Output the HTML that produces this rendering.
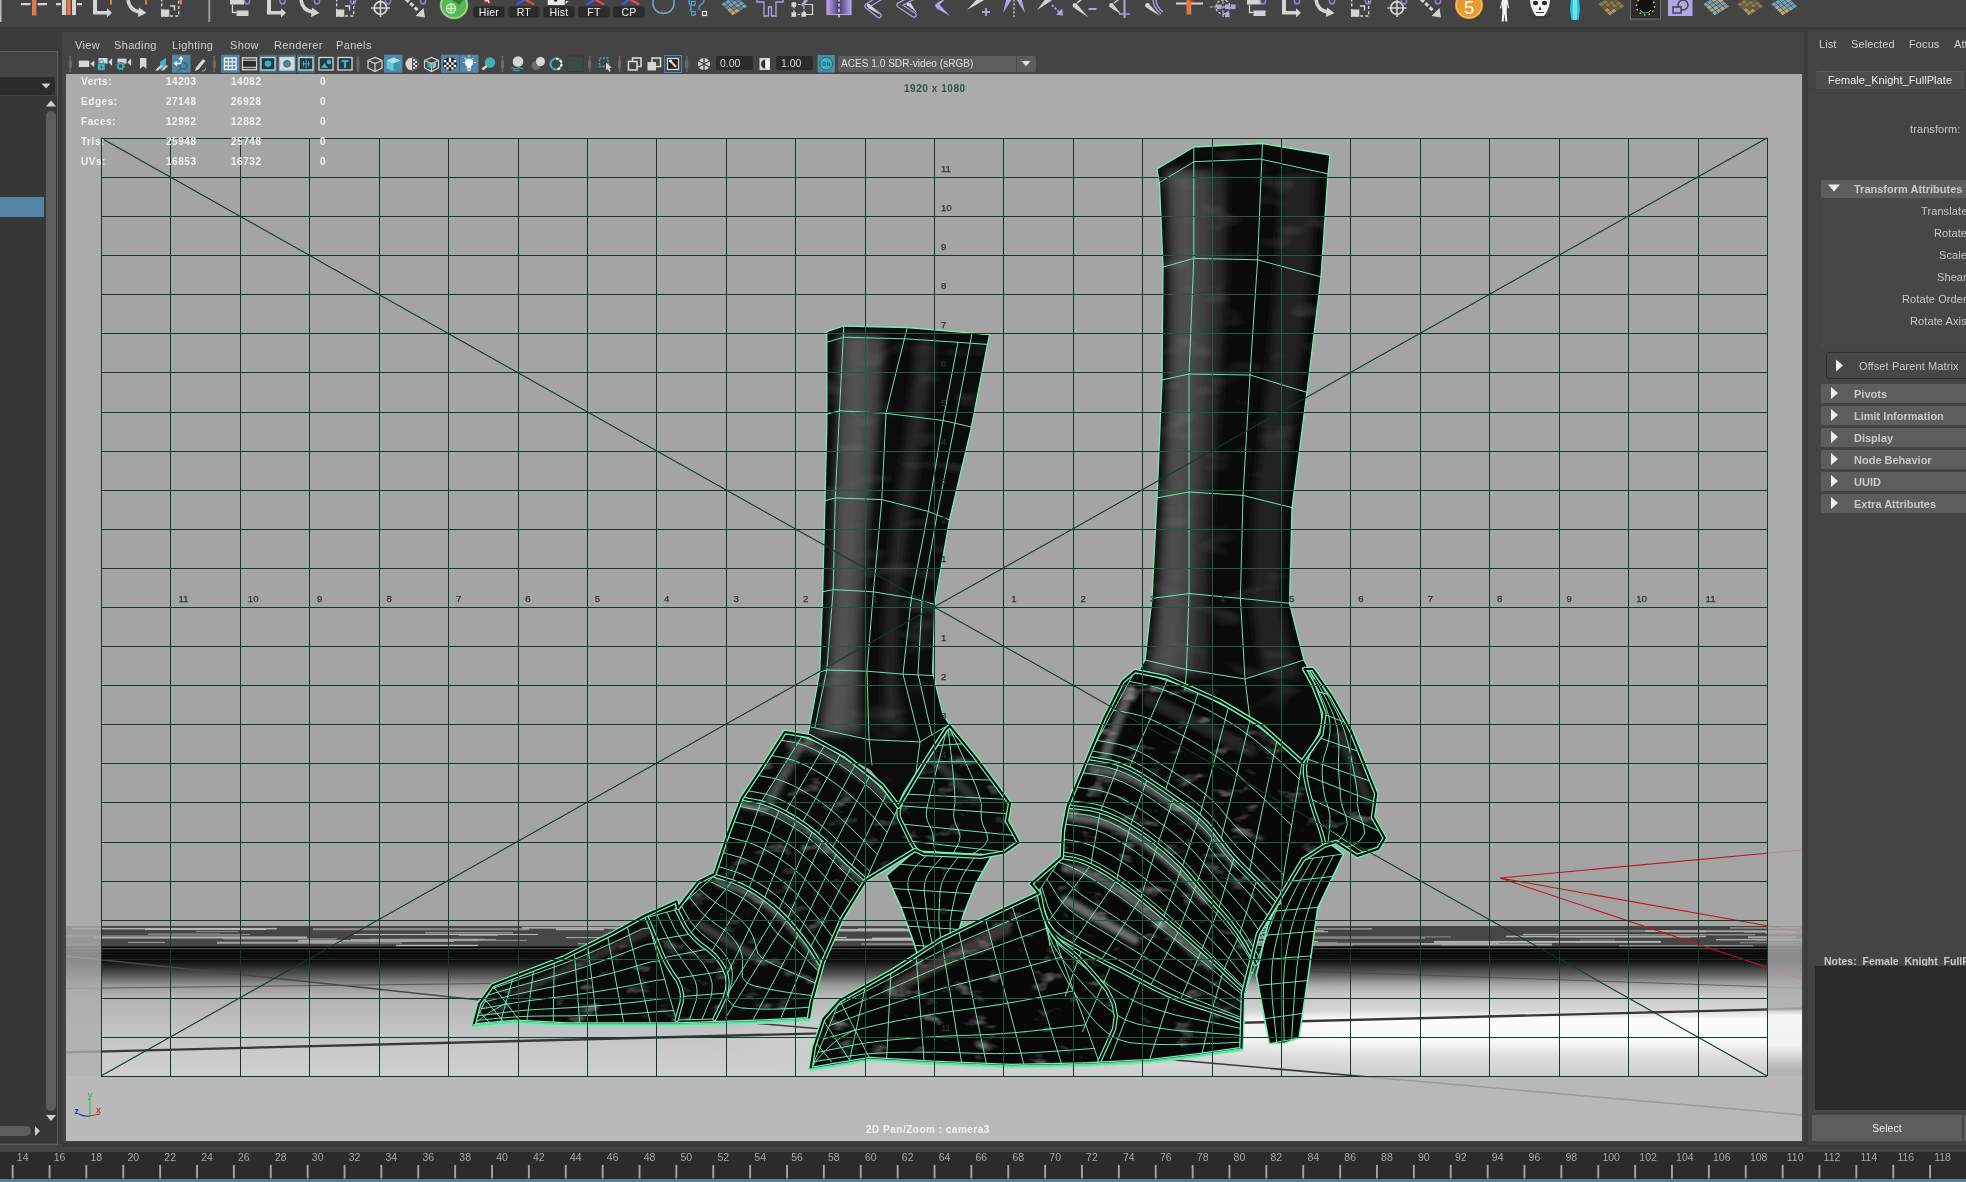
<!DOCTYPE html>
<html><head><meta charset="utf-8"><title>Maya</title>
<style>
html,body{margin:0;padding:0;}
body{width:1966px;height:1182px;overflow:hidden;background:#444444;position:relative;font-family:"Liberation Sans","DejaVu Sans",sans-serif;font-size:11px;color:#d8d8d8;}
.abs{position:absolute;}
.t{position:absolute;white-space:nowrap;line-height:1;will-change:transform;}
svg{position:absolute;left:0;top:0;overflow:visible;}
svg text{font-family:"Liberation Sans","DejaVu Sans",sans-serif;}

</style></head>
<body>
<div class="abs" style="left:0;top:0;width:1966px;height:27px;background:#444"></div>
<div class="abs" style="left:0;top:27px;width:1966px;height:3px;background:#3a3a3a"></div>
<div class="abs" style="left:0;top:30px;width:1966px;height:2px;background:#3c3c3c"></div>
<svg width="1966" height="32" viewBox="0 0 1966 32" style="overflow:hidden;will-change:transform"><rect x="-0.5" y="0" width="2" height="22" fill="#bdbdbd"/><rect x="21" y="3" width="9.5" height="2.2" fill="#d4d4d4"/><rect x="37.5" y="3" width="9.5" height="2.2" fill="#d4d4d4"/><rect x="32" y="0" width="4.4" height="15.5" fill="#e07a48"/><rect x="56" y="3" width="5" height="2.2" fill="#d4d4d4"/><rect x="77" y="3" width="5" height="2.2" fill="#d4d4d4"/><rect x="62" y="0" width="4" height="15" fill="#d4d4d4"/><rect x="66.5" y="0" width="4.2" height="15" fill="#e07a48"/><rect x="72" y="0" width="4" height="15" fill="#d4d4d4"/><path d="M93 0h4v11h10v-2.8l5 4.6-5 4.6v-2.8h-14z" fill="#d4d4d4"/><rect x="110" y="0" width="2" height="4.5" fill="#e07a48"/><path d="M128 0c1 7 5 11 12 12.3" fill="none" stroke="#d4d4d4" stroke-width="3.6"/><path d="M139 7.5l7.5 5.5-8.5 4z" fill="#d4d4d4"/><rect x="145" y="0" width="2" height="4.5" fill="#e07a48"/><rect x="161.7" y="-3" width="17" height="19" fill="none" stroke="#d4d4d4" stroke-width="1.4" stroke-dasharray="3 2.2"/><rect x="161" y="9.5" width="8.3" height="7.2" fill="#d4d4d4"/><path d="M170 6h4.5v4.5" fill="none" stroke="#d4d4d4" stroke-width="1.4"/><rect x="180" y="0" width="2" height="4.5" fill="#e07a48"/><rect x="208.3" y="0" width="2" height="22" fill="#9a9a9a"/><rect x="230" y="0" width="14" height="4.5" fill="#d4d4d4"/><path d="M232.5 5v7.5h4" fill="none" stroke="#d4d4d4" stroke-width="1.3"/><rect x="236.5" y="10.5" width="12" height="5.5" fill="#d4d4d4"/><ellipse cx="247" cy="0.5" rx="2.6" ry="3.4" fill="none" stroke="#8a86c8" stroke-width="1.6"/><path d="M267 0h4v11h10v-2.8l5 4.6-5 4.6v-2.8h-14z" fill="#d4d4d4"/><ellipse cx="282.5" cy="0.5" rx="2.6" ry="3.4" fill="none" stroke="#8a86c8" stroke-width="1.6"/><path d="M301 0c1 7 5 11 12 12.3" fill="none" stroke="#d4d4d4" stroke-width="3.6"/><path d="M312 7.5l7.5 5.5-8.5 4z" fill="#d4d4d4"/><ellipse cx="317" cy="0.5" rx="2.6" ry="3.4" fill="none" stroke="#8a86c8" stroke-width="1.6"/><rect x="336.7" y="-3" width="17" height="19" fill="none" stroke="#d4d4d4" stroke-width="1.4" stroke-dasharray="3 2.2"/><rect x="336" y="9.5" width="8.3" height="7.2" fill="#d4d4d4"/><path d="M345 6h4.5v4.5" fill="none" stroke="#d4d4d4" stroke-width="1.4"/><ellipse cx="353" cy="0.5" rx="2.6" ry="3.4" fill="none" stroke="#8a86c8" stroke-width="1.6"/><circle cx="380.5" cy="8" r="6.3" fill="none" stroke="#d4d4d4" stroke-width="1.8"/><path d="M380.5 -2v19M371 8h19" stroke="#d4d4d4" stroke-width="1.6"/><ellipse cx="388" cy="0.5" rx="2.6" ry="3.4" fill="none" stroke="#8a86c8" stroke-width="1.6"/><path d="M406 -1l12 11.5" stroke="#d4d4d4" stroke-width="3.2" stroke-dasharray="4 2"/><path d="M425 17.5l-9.5-1.5 8-8z" fill="#d4d4d4"/><ellipse cx="423" cy="0.5" rx="2.6" ry="3.4" fill="none" stroke="#8a86c8" stroke-width="1.6"/><circle cx="454" cy="5" r="14.3" fill="#59b556"/><circle cx="454" cy="5" r="13" fill="none" stroke="#9ad894" stroke-width="1.6"/><path d="M447 -6c6-3 14 0 17 5l-5 6c-4-4-9-4-12-11z" fill="#2e7d32"/><circle cx="451" cy="8.5" r="4.6" fill="#7ccc78" stroke="#d8f0d4" stroke-width="1.2"/><path d="M451 4v9M446.5 8.5h9" stroke="#d8f0d4" stroke-width="1"/><rect x="473.2" y="6.2" width="31.4" height="11.6" rx="3" fill="#2b2b2b"/><text x="488.9" y="16" font-size="10.5" fill="#f2f2f2" text-anchor="middle" font-family="'Liberation Sans','DejaVu Sans',sans-serif" letter-spacing="0.2">Hier</text><path d="M483.7 -1l1.5 4 1.5-2 2 3 1.5-1-1.5-4.5" fill="#fff" stroke="#c02030" stroke-width="1"/><rect x="508.2" y="6.2" width="31.4" height="11.6" rx="3" fill="#2b2b2b"/><text x="523.9" y="16" font-size="10.5" fill="#f2f2f2" text-anchor="middle" font-family="'Liberation Sans','DejaVu Sans',sans-serif" letter-spacing="0.2">RT</text><path d="M516.7 4.5l8.5-5" stroke="#4a52e0" stroke-width="2.2"/><path d="M525.2 -0.5l9 5" stroke="#e04858" stroke-width="2.2"/><rect x="543.2" y="6.2" width="31.4" height="11.6" rx="3" fill="#2b2b2b"/><text x="558.9000000000001" y="16" font-size="10.5" fill="#f2f2f2" text-anchor="middle" font-family="'Liberation Sans','DejaVu Sans',sans-serif" letter-spacing="0.2">Hist</text><rect x="547.7" y="-2" width="17" height="7" fill="#e8e8e8"/><circle cx="555.7" cy="0" r="1.8" fill="#111"/><path d="M565.7 1l3 0-3 3z" fill="#e8e8e8"/><rect x="578.2" y="6.2" width="31.4" height="11.6" rx="3" fill="#2b2b2b"/><text x="593.9000000000001" y="16" font-size="10.5" fill="#f2f2f2" text-anchor="middle" font-family="'Liberation Sans','DejaVu Sans',sans-serif" letter-spacing="0.2">FT</text><path d="M586.7 4.5l8.5-5" stroke="#4a52e0" stroke-width="2.2"/><path d="M595.2 -0.5l9 5" stroke="#e04858" stroke-width="2.2"/><rect x="613.2" y="6.2" width="31.4" height="11.6" rx="3" fill="#2b2b2b"/><text x="628.9000000000001" y="16" font-size="10.5" fill="#f2f2f2" text-anchor="middle" font-family="'Liberation Sans','DejaVu Sans',sans-serif" letter-spacing="0.2">CP</text><path d="M621.7 4.5l8.5-5" stroke="#4a52e0" stroke-width="2.2"/><path d="M630.2 -0.5l9 5" stroke="#e04858" stroke-width="2.2"/><circle cx="663.5" cy="3" r="10.6" fill="none" stroke="#6aaed0" stroke-width="1.5"/><path d="M660.8 11.8a3 1.6 0 0 1 5.4 0" fill="none" stroke="#d04040" stroke-width="1"/><path d="M690 -1c-4 5 4 6 0 12M703 -1c4 5-8 6-3 11" fill="none" stroke="#4a8fb8" stroke-width="1.8"/><g fill="#444" stroke="#5aa0c8" stroke-width="1.2"><rect x="691.5" y="1.5" width="3.6" height="3.6"/><rect x="691.5" y="11.5" width="3.6" height="3.6"/></g><rect x="702.5" y="11.5" width="4" height="4" fill="#444" stroke="#e0e0e0" stroke-width="1.2"/><g transform="matrix(3.75,-2.25,2.9,2.9,721,4)"><rect x="0.06" y="0.06" width="0.88" height="0.88" rx="0.12" fill="#6f9fb4"/><rect x="1.06" y="0.06" width="0.88" height="0.88" rx="0.12" fill="#6f9fb4"/><rect x="2.06" y="0.06" width="0.88" height="0.88" rx="0.12" fill="#5c8494"/><rect x="3.06" y="0.06" width="0.88" height="0.88" rx="0.12" fill="#c8a860"/><rect x="0.06" y="1.06" width="0.88" height="0.88" rx="0.12" fill="#5c8494"/><rect x="1.06" y="1.06" width="0.88" height="0.88" rx="0.12" fill="#6f9fb4"/><rect x="2.06" y="1.06" width="0.88" height="0.88" rx="0.12" fill="#6f9fb4"/><rect x="3.06" y="1.06" width="0.88" height="0.88" rx="0.12" fill="#5c8494"/><rect x="0.06" y="2.06" width="0.88" height="0.88" rx="0.12" fill="#c8a860"/><rect x="1.06" y="2.06" width="0.88" height="0.88" rx="0.12" fill="#5c8494"/><rect x="2.06" y="2.06" width="0.88" height="0.88" rx="0.12" fill="#6f9fb4"/><rect x="3.06" y="2.06" width="0.88" height="0.88" rx="0.12" fill="#6f9fb4"/><rect x="0.06" y="3.06" width="0.88" height="0.88" rx="0.12" fill="#c8a860"/><rect x="1.06" y="3.06" width="0.88" height="0.88" rx="0.12" fill="#c8a860"/><rect x="2.06" y="3.06" width="0.88" height="0.88" rx="0.12" fill="#5c8494"/><rect x="3.06" y="3.06" width="0.88" height="0.88" rx="0.12" fill="#6f9fb4"/></g><path d="M757 -1v3h7v14h4.5v-9h3v9h4.5v-14h7v-3" fill="none" stroke="#b0a2e4" stroke-width="1.3"/><rect x="794" y="4.5" width="10" height="10" fill="none" stroke="#d4d4d4" stroke-width="1.2" stroke-dasharray="2.4 1.6"/><path d="M804 4.5h8.5v10H804" fill="none" stroke="#d4d4d4" stroke-width="1.2"/><g fill="#d4d4d4"><rect x="791.5" y="2.2" width="4.6" height="4.6"/><rect x="791.5" y="12.2" width="4.6" height="4.6"/><rect x="801.5" y="12.2" width="4.6" height="4.6"/></g><path d="M802 6l5-7" stroke="#b0a2e4" stroke-width="3"/><defs><linearGradient id="mir" x1="0" y1="0" x2="1" y2="0"><stop offset="0" stop-color="#b8a8f0"/><stop offset="0.42" stop-color="#5a4a80"/><stop offset="0.5" stop-color="#3c3258"/><stop offset="0.58" stop-color="#5a4a80"/><stop offset="1" stop-color="#b8a8f0"/></linearGradient></defs><rect x="827" y="-2" width="24" height="16.5" fill="url(#mir)" stroke="#b0a2e4" stroke-width="1.2"/><path d="M839 -2v20" stroke="#f0f0f0" stroke-width="1.3" stroke-dasharray="3.4 2"/><path d="M880 -2l-13 8 12 9.5" fill="none" stroke="#b0a2e4" stroke-width="5.5" stroke-linejoin="round" stroke-linecap="round"/><path d="M880 -2l-13 8 12 9.5" fill="none" stroke="#444" stroke-width="3" stroke-linejoin="round" stroke-linecap="round"/><path d="M867.8 8.1L880.0 14.5L870.2 4.9z" fill="#d4d4d4"/><circle cx="868.5" cy="5.5" r="1.8" fill="#d4d4d4"/><path d="M912 -2l-13 7 15 10" fill="none" stroke="#b0a2e4" stroke-width="5.5" stroke-linejoin="round" stroke-linecap="round"/><path d="M912 -2l-13 7 15 10" fill="none" stroke="#444" stroke-width="3" stroke-linejoin="round" stroke-linecap="round"/><path d="M907.5 5.3L917.0 13.0L910.5 2.7z" fill="#d4d4d4"/><circle cx="908.5" cy="4.5" r="1.8" fill="#d4d4d4"/><path d="M936.0 7.9L950.0 16.0L939.0 4.1z" fill="#b0a2e4"/><circle cx="937.5" cy="5.5" r="2.3" fill="#b0a2e4"/><path d="M939.0 5.3L946.0 -2.0L937.0 2.7z" fill="#b0a2e4"/><path d="M980.1 -4.3L967.0 10.0L983.9 0.3z" fill="#d4d4d4"/><path d="M986 8v8M982 12h8" stroke="#b0a2e4" stroke-width="1.8"/><path d="M1006.6 -2.0L1003.0 13.0L1011.4 0.0z" fill="#b0a2e4"/><path d="M1016.6 0.0L1025.0 13.0L1021.4 -2.0z" fill="#b0a2e4"/><path d="M1014 -1v18" stroke="#b8b8a8" stroke-width="1.5" stroke-dasharray="2.4 1.6"/><path d="M1048.0 -4.2L1037.0 10.0L1052.0 0.2z" fill="#d4d4d4"/><path d="M1052 5l7 7" stroke="#b0a2e4" stroke-width="1.8" stroke-dasharray="2.4 1.4"/><path d="M1063 15.5l-7-.8 6.2-6.2z" fill="#b0a2e4"/><path d="M1074.6 8.2L1088.0 17.0L1077.4 4.8z" fill="#d4d4d4"/><circle cx="1075" cy="5.5" r="2.4" fill="#d4d4d4"/><path d="M1077 3l5-4" stroke="#d4d4d4" stroke-width="1.6"/><rect x="1088.5" y="8" width="8" height="2" fill="#b0a2e4"/><path d="M1111.7 8.5L1121.0 14.0L1114.3 5.5z" fill="#d4d4d4"/><circle cx="1111.5" cy="5.5" r="2.4" fill="#d4d4d4"/><path d="M1114 3l5-4" stroke="#d4d4d4" stroke-width="1.6"/><path d="M1124.5 -1v19" stroke="#b0a2e4" stroke-width="2"/><path d="M1119 14h11" stroke="#b0a2e4" stroke-width="1.4"/><path d="M1147.7 8.5L1160.0 16.0L1150.3 5.5z" fill="#d4d4d4"/><circle cx="1147.5" cy="5.5" r="2.4" fill="#d4d4d4"/><path d="M1153 -1c0 7 3 11 8 15" fill="none" stroke="#b0a2e4" stroke-width="1.3"/><path d="M1156 -1c0 6 3 10 7 13" fill="none" stroke="#b0a2e4" stroke-width="1.3"/><rect x="1176" y="2.5" width="27" height="2" fill="#d4d4d4"/><rect x="1186.5" y="0" width="4.8" height="14.5" fill="#e07a48"/><path d="M1190 0c1 2 3 2 4 0" stroke="#d03020" stroke-width="1.2" fill="none"/><circle cx="1223" cy="7" r="7" fill="none" stroke="#d4d4d4" stroke-width="1.3" stroke-dasharray="2.6 1.8"/><path d="M1210 7h26M1223 -3v20" stroke="#d4d4d4" stroke-width="1" stroke-dasharray="2.6 1.8"/><g fill="#b0a2e4"><rect x="1217" y="4.5" width="4.6" height="4.6"/><rect x="1225" y="4.5" width="4.6" height="4.6"/><rect x="1231" y="4.5" width="4.6" height="4.6"/><rect x="1225" y="12.5" width="4.6" height="4.6"/></g><rect x="1247" y="0" width="14" height="4.5" fill="#d4d4d4"/><path d="M1249.5 5v7.5h4" fill="none" stroke="#d4d4d4" stroke-width="1.3"/><rect x="1253.5" y="10.5" width="12" height="5.5" fill="#d4d4d4"/><ellipse cx="1263" cy="0.5" rx="2.6" ry="3.4" fill="none" stroke="#8a86c8" stroke-width="1.6"/><path d="M1282 0h4v11h10v-2.8l5 4.6-5 4.6v-2.8h-14z" fill="#d4d4d4"/><ellipse cx="1297" cy="0.5" rx="2.6" ry="3.4" fill="none" stroke="#8a86c8" stroke-width="1.6"/><path d="M1316 0c1 7 5 11 12 12.3" fill="none" stroke="#d4d4d4" stroke-width="3.6"/><path d="M1327 7.5l7.5 5.5-8.5 4z" fill="#d4d4d4"/><ellipse cx="1332" cy="0.5" rx="2.6" ry="3.4" fill="none" stroke="#8a86c8" stroke-width="1.6"/><rect x="1351.7" y="-3" width="17" height="19" fill="none" stroke="#d4d4d4" stroke-width="1.4" stroke-dasharray="3 2.2"/><rect x="1351" y="9.5" width="8.3" height="7.2" fill="#d4d4d4"/><path d="M1360 6h4.5v4.5" fill="none" stroke="#d4d4d4" stroke-width="1.4"/><ellipse cx="1368" cy="0.5" rx="2.6" ry="3.4" fill="none" stroke="#8a86c8" stroke-width="1.6"/><circle cx="1397" cy="8" r="6.3" fill="none" stroke="#d4d4d4" stroke-width="1.8"/><path d="M1397 -2v19M1387.500 8h19" stroke="#d4d4d4" stroke-width="1.6"/><ellipse cx="1404" cy="0.5" rx="2.6" ry="3.4" fill="none" stroke="#8a86c8" stroke-width="1.6"/><path d="M1421 -1l12 11.500" stroke="#d4d4d4" stroke-width="3.2" stroke-dasharray="4 2"/><path d="M1441 17.500l-9.500-1.500 8-8z" fill="#d4d4d4"/><ellipse cx="1438" cy="0.5" rx="2.6" ry="3.4" fill="none" stroke="#8a86c8" stroke-width="1.6"/><circle cx="1469" cy="5" r="14" fill="#e89a2e"/><circle cx="1469" cy="5" r="12.6" fill="none" stroke="#f4c070" stroke-width="1.2"/><text x="1469" y="13.5" font-size="19" fill="#fff" text-anchor="middle" font-family="'Liberation Sans',sans-serif">5</text><path d="M1502.500 -2h5l1.5 10-1 .5-1-5-.3 9 .6 9h-2l-.8-8-.8 8h-2l.6-9-.3-9-1 5-1-.5z" fill="#f2f2f2"/><path d="M1530 -2c0 9 3 14 6 18h8c3-4 6-9 6-18z" fill="#f0f0f0"/><ellipse cx="1535.500" cy="3" rx="2.600" ry="2.200" fill="#222"/><ellipse cx="1544.500" cy="3" rx="2.600" ry="2.200" fill="#222"/><path d="M1540 6l-1.500 4h3z" fill="#333"/><path d="M1536 12.500h8" stroke="#333" stroke-width="1"/><path d="M1528 14c4 5 20 5 24 0" stroke="#333" stroke-width="2" fill="none" opacity="0.5"/><path d="M1571 -2h8l1 12-1.500 10h-7l-1.500-10z" fill="#22c0d8"/><path d="M1573 -2h4l.5 12-.8 10h-3.400l-.8-10z" fill="#6ae0f0"/><g transform="matrix(3.75,-2.25,2.9,2.9,1598,4)"><rect x="0.06" y="0.06" width="0.88" height="0.88" rx="0.12" fill="#8a7a4a"/><rect x="1.06" y="0.06" width="0.88" height="0.88" rx="0.12" fill="#8a7a4a"/><rect x="2.06" y="0.06" width="0.88" height="0.88" rx="0.12" fill="#6a6240"/><rect x="3.06" y="0.06" width="0.88" height="0.88" rx="0.12" fill="#b09858"/><rect x="0.06" y="1.06" width="0.88" height="0.88" rx="0.12" fill="#6a6240"/><rect x="1.06" y="1.06" width="0.88" height="0.88" rx="0.12" fill="#8a7a4a"/><rect x="2.06" y="1.06" width="0.88" height="0.88" rx="0.12" fill="#8a7a4a"/><rect x="3.06" y="1.06" width="0.88" height="0.88" rx="0.12" fill="#6a6240"/><rect x="0.06" y="2.06" width="0.88" height="0.88" rx="0.12" fill="#b09858"/><rect x="1.06" y="2.06" width="0.88" height="0.88" rx="0.12" fill="#6a6240"/><rect x="2.06" y="2.06" width="0.88" height="0.88" rx="0.12" fill="#8a7a4a"/><rect x="3.06" y="2.06" width="0.88" height="0.88" rx="0.12" fill="#8a7a4a"/><rect x="0.06" y="3.06" width="0.88" height="0.88" rx="0.12" fill="#b09858"/><rect x="1.06" y="3.06" width="0.88" height="0.88" rx="0.12" fill="#b09858"/><rect x="2.06" y="3.06" width="0.88" height="0.88" rx="0.12" fill="#6a6240"/><rect x="3.06" y="3.06" width="0.88" height="0.88" rx="0.12" fill="#8a7a4a"/></g><rect x="1630.500" y="-3" width="30" height="22" fill="#2b2b2b" stroke="#707070" stroke-width="1"/><circle cx="1645.500" cy="6" r="9" fill="#111" stroke="#e8e040" stroke-width="1.4" stroke-dasharray="1.600 3.100"/><path d="M1640 10a6.500 6.500 0 0 0 11 0" fill="none" stroke="#6ad0a0" stroke-width="1"/><rect x="1668" y="-3" width="24.500" height="19" fill="#b4a4e6"/><circle cx="1683" cy="5" r="5" fill="none" stroke="#444" stroke-width="1.500"/><rect x="1673" y="7" width="8" height="6" fill="#b4a4e6" stroke="#444" stroke-width="1.500"/><g transform="matrix(3.75,-2.25,2.9,2.9,1703,4)"><rect x="0.06" y="0.06" width="0.88" height="0.88" rx="0.12" fill="#6f9fb4"/><rect x="1.06" y="0.06" width="0.88" height="0.88" rx="0.12" fill="#6f9fb4"/><rect x="2.06" y="0.06" width="0.88" height="0.88" rx="0.12" fill="#c8a860"/><rect x="3.06" y="0.06" width="0.88" height="0.88" rx="0.12" fill="#88a8b8"/><rect x="0.06" y="1.06" width="0.88" height="0.88" rx="0.12" fill="#c8a860"/><rect x="1.06" y="1.06" width="0.88" height="0.88" rx="0.12" fill="#6f9fb4"/><rect x="2.06" y="1.06" width="0.88" height="0.88" rx="0.12" fill="#6f9fb4"/><rect x="3.06" y="1.06" width="0.88" height="0.88" rx="0.12" fill="#c8a860"/><rect x="0.06" y="2.06" width="0.88" height="0.88" rx="0.12" fill="#88a8b8"/><rect x="1.06" y="2.06" width="0.88" height="0.88" rx="0.12" fill="#c8a860"/><rect x="2.06" y="2.06" width="0.88" height="0.88" rx="0.12" fill="#6f9fb4"/><rect x="3.06" y="2.06" width="0.88" height="0.88" rx="0.12" fill="#6f9fb4"/><rect x="0.06" y="3.06" width="0.88" height="0.88" rx="0.12" fill="#88a8b8"/><rect x="1.06" y="3.06" width="0.88" height="0.88" rx="0.12" fill="#88a8b8"/><rect x="2.06" y="3.06" width="0.88" height="0.88" rx="0.12" fill="#c8a860"/><rect x="3.06" y="3.06" width="0.88" height="0.88" rx="0.12" fill="#6f9fb4"/></g><g transform="matrix(3.75,-2.25,2.9,2.9,1737,4)"><rect x="0.06" y="0.06" width="0.88" height="0.88" rx="0.12" fill="#8a7a4a"/><rect x="1.06" y="0.06" width="0.88" height="0.88" rx="0.12" fill="#8a7a4a"/><rect x="2.06" y="0.06" width="0.88" height="0.88" rx="0.12" fill="#6a6240"/><rect x="3.06" y="0.06" width="0.88" height="0.88" rx="0.12" fill="#b09858"/><rect x="0.06" y="1.06" width="0.88" height="0.88" rx="0.12" fill="#6a6240"/><rect x="1.06" y="1.06" width="0.88" height="0.88" rx="0.12" fill="#8a7a4a"/><rect x="2.06" y="1.06" width="0.88" height="0.88" rx="0.12" fill="#8a7a4a"/><rect x="3.06" y="1.06" width="0.88" height="0.88" rx="0.12" fill="#6a6240"/><rect x="0.06" y="2.06" width="0.88" height="0.88" rx="0.12" fill="#b09858"/><rect x="1.06" y="2.06" width="0.88" height="0.88" rx="0.12" fill="#6a6240"/><rect x="2.06" y="2.06" width="0.88" height="0.88" rx="0.12" fill="#8a7a4a"/><rect x="3.06" y="2.06" width="0.88" height="0.88" rx="0.12" fill="#8a7a4a"/><rect x="0.06" y="3.06" width="0.88" height="0.88" rx="0.12" fill="#b09858"/><rect x="1.06" y="3.06" width="0.88" height="0.88" rx="0.12" fill="#b09858"/><rect x="2.06" y="3.06" width="0.88" height="0.88" rx="0.12" fill="#6a6240"/><rect x="3.06" y="3.06" width="0.88" height="0.88" rx="0.12" fill="#8a7a4a"/></g><g transform="matrix(3.75,-2.25,2.9,2.9,1771,4)"><rect x="0.06" y="0.06" width="0.88" height="0.88" rx="0.12" fill="#6f9fb4"/><rect x="1.06" y="0.06" width="0.88" height="0.88" rx="0.12" fill="#6f9fb4"/><rect x="2.06" y="0.06" width="0.88" height="0.88" rx="0.12" fill="#88a8b8"/><rect x="3.06" y="0.06" width="0.88" height="0.88" rx="0.12" fill="#c8a860"/><rect x="0.06" y="1.06" width="0.88" height="0.88" rx="0.12" fill="#88a8b8"/><rect x="1.06" y="1.06" width="0.88" height="0.88" rx="0.12" fill="#6f9fb4"/><rect x="2.06" y="1.06" width="0.88" height="0.88" rx="0.12" fill="#6f9fb4"/><rect x="3.06" y="1.06" width="0.88" height="0.88" rx="0.12" fill="#88a8b8"/><rect x="0.06" y="2.06" width="0.88" height="0.88" rx="0.12" fill="#c8a860"/><rect x="1.06" y="2.06" width="0.88" height="0.88" rx="0.12" fill="#88a8b8"/><rect x="2.06" y="2.06" width="0.88" height="0.88" rx="0.12" fill="#6f9fb4"/><rect x="3.06" y="2.06" width="0.88" height="0.88" rx="0.12" fill="#6f9fb4"/><rect x="0.06" y="3.06" width="0.88" height="0.88" rx="0.12" fill="#c8a860"/><rect x="1.06" y="3.06" width="0.88" height="0.88" rx="0.12" fill="#c8a860"/><rect x="2.06" y="3.06" width="0.88" height="0.88" rx="0.12" fill="#88a8b8"/><rect x="3.06" y="3.06" width="0.88" height="0.88" rx="0.12" fill="#6f9fb4"/></g></svg>
<div class="abs" style="left:0px;top:30px;width:62px;height:1114px;background:#3b3b3b;"></div>
<div class="abs" style="left:0px;top:51px;width:57px;height:1092px;background:#444;border:1px solid #5c5c5c;border-left:none;"></div>
<div class="abs" style="left:0px;top:77px;width:55px;height:18px;background:#2b2b2b;border-radius:0 2px 2px 0;"></div>
<div class="abs" style="left:0px;top:96px;width:57px;height:1028px;background:#373737;"></div>
<div class="abs" style="left:0px;top:197px;width:44px;height:20px;background:#5285a6;"></div>
<div class="abs" style="left:45px;top:96px;width:12px;height:1028px;background:#373737;"></div>
<div class="abs" style="left:46px;top:111px;width:10px;height:1000px;background:#5d5d5d;border-radius:5px;"></div>
<div class="abs" style="left:0px;top:1124px;width:57px;height:19px;background:#373737;"></div>
<div class="abs" style="left:-6px;top:1126px;width:37px;height:10px;background:#5d5d5d;border-radius:5px;"></div>
<svg width="66" height="1182" viewBox="0 0 66 1182"><g fill="#cfcfcf"><path d="M41.5 83.5h9l-4.5 5z"/><path d="M46 106.5h10l-5-6z"/><path d="M46 1115h10l-5 6z"/><path d="M35 1126v10l5-5z"/></g></svg>
<div class="abs" style="left:62px;top:32px;width:1740px;height:1110px;background:#444;"></div>
<div class="t" style="left:74.5px;top:40px;font-size:11px;color:#cfcfcf;letter-spacing:0.35px;">View</div>
<div class="t" style="left:114px;top:40px;font-size:11px;color:#cfcfcf;letter-spacing:0.35px;">Shading</div>
<div class="t" style="left:172px;top:40px;font-size:11px;color:#cfcfcf;letter-spacing:0.35px;">Lighting</div>
<div class="t" style="left:230px;top:40px;font-size:11px;color:#cfcfcf;letter-spacing:0.35px;">Show</div>
<div class="t" style="left:274px;top:40px;font-size:11px;color:#cfcfcf;letter-spacing:0.35px;">Renderer</div>
<div class="t" style="left:336px;top:40px;font-size:11px;color:#cfcfcf;letter-spacing:0.35px;">Panels</div>
<div class="abs" style="left:716px;top:56px;width:37px;height:14px;background:#2b2b2b;border-radius:2px;"></div>
<div class="t" style="left:720px;top:58px;font-size:10.5px;color:#d8d8d8;">0.00</div>
<div class="abs" style="left:776px;top:56px;width:37px;height:14px;background:#2b2b2b;border-radius:2px;"></div>
<div class="t" style="left:781px;top:58px;font-size:10.5px;color:#d8d8d8;">1.00</div>
<div class="abs" style="left:838px;top:56px;width:198px;height:16px;background:#5d5d5d;border-radius:2px;"></div>
<div class="t" style="left:841px;top:59px;font-size:10px;color:#e0e0e0;letter-spacing:0.05px;">ACES 1.0 SDR-video (sRGB)</div>
<svg width="1966" height="1182" viewBox="0 0 1966 1182"><rect x="69.5" y="56" width="1.6" height="16" fill="#6a6a6a"/><rect x="68.7" y="60" width="3.2" height="8" rx="1.5" fill="#6a6a6a"/><rect x="213.5" y="56" width="1.6" height="16" fill="#6a6a6a"/><rect x="212.70000000000002" y="60" width="3.2" height="8" rx="1.5" fill="#6a6a6a"/><rect x="357.2" y="56" width="1.6" height="16" fill="#6a6a6a"/><rect x="356.4" y="60" width="3.2" height="8" rx="1.5" fill="#6a6a6a"/><rect x="501.7" y="56" width="1.6" height="16" fill="#6a6a6a"/><rect x="500.9" y="60" width="3.2" height="8" rx="1.5" fill="#6a6a6a"/><rect x="588.8000000000001" y="56" width="1.6" height="16" fill="#6a6a6a"/><rect x="588.0" y="60" width="3.2" height="8" rx="1.5" fill="#6a6a6a"/><rect x="618.8000000000001" y="56" width="1.6" height="16" fill="#6a6a6a"/><rect x="618.0" y="60" width="3.2" height="8" rx="1.5" fill="#6a6a6a"/><rect x="685.9000000000001" y="56" width="1.6" height="16" fill="#6a6a6a"/><rect x="685.1" y="60" width="3.2" height="8" rx="1.5" fill="#6a6a6a"/><rect x="172" y="54.7" width="18.5" height="18" fill="#5285a6"/><rect x="221" y="54.7" width="18.5" height="18" fill="#5285a6"/><rect x="259" y="54.7" width="18" height="18" fill="#3f7186"/><rect x="278" y="54.7" width="18" height="18" fill="#3f7186"/><rect x="297" y="54.7" width="18" height="18" fill="#3f7186"/><rect x="384" y="54.7" width="18.5" height="18" fill="#5285a6"/><rect x="441" y="54.7" width="18.5" height="18" fill="#5285a6"/><rect x="460" y="54.7" width="18.5" height="18" fill="#5285a6"/><rect x="78.8" y="60.6" width="10.5" height="6.4" fill="#d6d6d6"/><path d="M90.3 63.8l4-3.4v6.8z" fill="#d6d6d6"/><rect x="98.5" y="58" width="9" height="5.6" fill="#d6d6d6"/><path d="M108.3 62l3.8-3.8v7.6z" fill="#d6d6d6"/><rect x="97.5" y="63.6" width="7.6" height="6.8" rx="0.8" fill="#43b0b8" stroke="#444" stroke-width="0.6"/><path d="M99.3 63.6v-1.4a2 2 0 0 1 4 0v1.4" fill="none" stroke="#43b0b8" stroke-width="1.3"/><rect x="100.7" y="66" width="1.2" height="2.4" fill="#1f5a60"/><rect x="117.5" y="58.6" width="9" height="5" fill="#d6d6d6"/><path d="M127.3 62.2l3.8-3.8v7.6z" fill="#d6d6d6"/><circle cx="120.6" cy="66" r="3.9" fill="#444"/><circle cx="120.6" cy="66" r="2.6" fill="none" stroke="#43b0b8" stroke-width="1.5"/><circle cx="120.6" cy="66" r="3.7" fill="none" stroke="#43b0b8" stroke-width="1.3" stroke-dasharray="1.45 1.45"/><path d="M140 58h6.4v11l-3.2-3-3.2 3z" fill="#d6d6d6"/><path d="M160 62l6-4.5v9l-6 3.5z" fill="#43b0b8"/><path d="M155 70.5l5-5h3l-5 5zM161 70.5l5-5h2.5l-5 5z" fill="#d6d6d6"/><circle cx="183.5" cy="66" r="3.4" fill="none" stroke="#1f6f82" stroke-width="1.4"/><path d="M181 68.5l-3.5 3" stroke="#1f6f82" stroke-width="1.6"/><path d="M175 63.5h6M181 63.5v-6M179 59.5l2-2.5 2 2.5M177 61.5l-2.5 2 2.5 2" stroke="#f0f0f0" stroke-width="1.3" fill="none"/><path d="M196 67.5l7-8.5 2.5 2-7 8.5-3.5 1.5z" fill="#d6d6d6"/><path d="M202 70.5a2.3 2.3 0 0 0 3.5-2.5" fill="none" stroke="#43b0b8" stroke-width="1.3"/><rect x="224.5" y="58" width="11.5" height="11.5" fill="none" stroke="#f2f2f2" stroke-width="1.4"/><path d="M228.3 58v11.5M232.2 58v11.5M224.5 61.8h11.5M224.5 65.7h11.5" stroke="#f2f2f2" stroke-width="1.2"/><rect x="242.5" y="57.8" width="14" height="12" fill="none" stroke="#d6d6d6" stroke-width="1.3"/><rect x="242.5" y="60.3" width="14" height="7" fill="#2d2d2d" stroke="#d6d6d6" stroke-width="1"/><rect x="261" y="57.5" width="14" height="12.5" fill="#1f3c44" stroke="#d6d6d6" stroke-width="1.3"/><circle cx="268" cy="63.8" r="3.3" fill="#43b0b8"/><rect x="280" y="57.5" width="14" height="12.5" fill="#d8d8d8" stroke="#d6d6d6" stroke-width="1.3"/><circle cx="287" cy="63.8" r="3.4" fill="#4a86a8" stroke="#2a5a70" stroke-width="0.8"/><rect x="299" y="57.5" width="14" height="12.5" fill="#1f3c44" stroke="#d6d6d6" stroke-width="1.3"/><path d="M302 63.8h8M306 59.5v8.5M303.5 61v5.6M308.5 61v5.6" stroke="#43b0b8" stroke-width="1" fill="none"/><rect x="319" y="57.5" width="14" height="12.5" fill="#1f3c44" stroke="#d6d6d6" stroke-width="1.3"/><path d="M321 68l3.5-5 3.5 5z" fill="#43b0b8"/><circle cx="329" cy="62" r="2.4" fill="#43b0b8"/><rect x="338" y="57.5" width="14" height="12.5" fill="#1f3c44" stroke="#d6d6d6" stroke-width="1.3"/><path d="M341.5 60h7v2h-2.4v6h-2.2v-6h-2.4z" fill="#43b0b8"/><path d="M368 60.5l7-3 7 3v7.5l-7 3.5-7-3.5z" fill="none" stroke="#d6d6d6" stroke-width="1.2"/><path d="M368 60.5l7 3 7-3M375 63.5v8" fill="none" stroke="#d6d6d6" stroke-width="1.2"/><path d="M386.5 60.5l7-3 7 3v7.5l-7 3.5-7-3.5z" fill="#63c6d4"/><path d="M386.5 60.5l7-3 7 3-7 3z" fill="#a6e4ec"/><path d="M393.5 63.5l7-3v7.5l-7 3.5z" fill="#3a9aaa"/><circle cx="412" cy="64" r="6.5" fill="#d6d6d6"/><path d="M412 57.5a6.5 6.5 0 0 1 0 13z" fill="#555"/><path d="M413 59h2v2h-2zM415 61h2v2h-2zM413 63h2v2h-2zM415 65h2v2h-2zM413 67h2v2h-2z" fill="#d6d6d6"/><path d="M424.5 60.5l7-3 7 3v7.5l-7 3.5-7-3.5z" fill="none" stroke="#d6d6d6" stroke-width="1.2"/><path d="M424.5 60.5l7 3 7-3M431.5 63.5v8" fill="none" stroke="#d6d6d6" stroke-width="1.2"/><path d="M427.5 62.5l4 1.8v4.5l-4-2z" fill="#43b0b8"/><path d="M432.5 64.3l3.5-1.8v4.5l-3.5 1.8z" fill="#8cd"/><circle cx="450" cy="64" r="6.8" fill="#1a1a1a"/><g fill="#f0f0f0"><rect x="444" y="60" width="2.4" height="2.4"/><rect x="448.8" y="60" width="2.4" height="2.4"/><rect x="453.6" y="60" width="2.4" height="2.4"/><rect x="446.4" y="62.4" width="2.4" height="2.4"/><rect x="451.2" y="62.4" width="2.4" height="2.4"/><rect x="444" y="64.8" width="2.4" height="2.4"/><rect x="448.8" y="64.8" width="2.4" height="2.4"/><rect x="453.6" y="64.8" width="2.4" height="2.4"/><rect x="446.4" y="67.2" width="2.4" height="2.4"/><rect x="451.2" y="67.2" width="2.4" height="2.4"/><rect x="448.8" y="57.6" width="2.4" height="2.4"/></g><path d="M469 58.5a4 4 0 0 1 2.2 7.4v2.6h-4.4v-2.6a4 4 0 0 1 2.2-7.4z" fill="#f4f4f4"/><rect x="467.3" y="69.3" width="3.4" height="1.6" fill="#ddd"/><path d="M469 55.5v1.5M463 62.5h1.6M474.4 62.5h1.6M464.6 58l1.1 1.1M473.4 58l-1.1 1.1" stroke="#f4f4f4" stroke-width="1.1"/><circle cx="490" cy="62.5" r="5.2" fill="#43b0b8"/><path d="M481.5 68.5l4.5-3.5 1.5 2-4.5 3.5z" fill="#d6d6d6"/><circle cx="518" cy="61.5" r="5.3" fill="#d6d6d6"/><path d="M511.5 67.5l4 1.5 4-1.5 4 1.5M513 70l3.5 1 3.5-1" stroke="#43b0b8" stroke-width="1.1" fill="none"/><circle cx="536" cy="65.5" r="4.5" fill="#6e6e6e"/><circle cx="540.5" cy="61.5" r="4.5" fill="#d6d6d6"/><circle cx="556" cy="64" r="5.5" fill="none" stroke="#43b0b8" stroke-width="2"/><path d="M556 58.5a5.5 5.5 0 0 1 0 11" fill="none" stroke="#f0f0f0" stroke-width="2.2" stroke-dasharray="2.6 1.6"/><rect x="567" y="56" width="16" height="15.5" fill="#3f4a48" stroke="#3a3a3a" stroke-width="1"/><rect x="599.5" y="58" width="8.5" height="8.5" fill="none" stroke="#43b0b8" stroke-width="1.3" stroke-dasharray="2 1.4"/><path d="M606 62.5l5.8 5.2-2.6.3 1.5 3-1.5.7-1.5-3-1.7 1.8z" fill="#d6d6d6"/><rect x="632.5" y="58" width="8.5" height="8.5" fill="none" stroke="#d6d6d6" stroke-width="1.6"/><rect x="628.5" y="61.5" width="8.5" height="8.5" fill="#444" stroke="#d6d6d6" stroke-width="1.6"/><rect x="652" y="58" width="8.5" height="8.5" fill="none" stroke="#d6d6d6" stroke-width="1.6"/><rect x="647.5" y="62" width="8.5" height="8.5" fill="#d6d6d6"/><rect x="664.5" y="55.5" width="17" height="17" fill="#3a4a54" stroke="#5285a6" stroke-width="1"/><rect x="667.5" y="58.5" width="11" height="11" fill="#222" stroke="#d6d6d6" stroke-width="1.3"/><path d="M670 60.5l6 6.5" stroke="#e8c49a" stroke-width="2.2"/><circle cx="670.5" cy="61" r="1.6" fill="#f4f4f4"/><circle cx="704" cy="64" r="6" fill="#d6d6d6"/><g stroke="#444" stroke-width="1.3"><path d="M704 58v4.5M709.2 61l-3.9 2.2M709.2 67l-3.9-2.2M704 70v-4.5M698.8 67l3.9-2.2M698.8 61l3.9 2.2"/></g><circle cx="704" cy="64" r="1.8" fill="#444"/><rect x="759.5" y="58" width="10.5" height="12" fill="#d6d6d6"/><path d="M765.5 59.5a4.5 4.5 0 0 0 0 9z" fill="#333"/><path d="M765.5 59.5a4.5 4.5 0 0 1 0 9z" fill="#fff"/><rect x="817.5" y="55" width="17.5" height="17.5" fill="#4d88a8"/><circle cx="826.3" cy="63.8" r="6.3" fill="#3fb4c0" stroke="#1f6f7a" stroke-width="1"/><text x="826.3" y="66" font-size="5.6" font-weight="bold" fill="#1c5a64" text-anchor="middle">ON</text><rect x="1016" y="56" width="1" height="16" fill="#4a4a4a"/><path d="M1021.5 61h9l-4.5 5.2z" fill="#e0e0e0"/></svg>
<svg width="1966" height="1182" viewBox="0 0 1966 1182">
<defs>
<clipPath id="vpclip"><rect x="66" y="74" width="1736" height="1067"/></clipPath>
<clipPath id="gateclip"><rect x="101" y="138" width="1666" height="938"/></clipPath>
<linearGradient id="floorg" gradientUnits="userSpaceOnUse" x1="0" y1="959" x2="0" y2="1141">
<stop offset="0" stop-color="#050505"/><stop offset="0.033" stop-color="#222"/><stop offset="0.088" stop-color="#555"/><stop offset="0.143" stop-color="#969696"/><stop offset="0.2" stop-color="#b2b2b2"/><stop offset="0.4" stop-color="#c4c4c4"/><stop offset="0.64" stop-color="#d0d0d0"/><stop offset="1" stop-color="#d0d0d0"/>
</linearGradient>
<linearGradient id="floorwv" gradientUnits="userSpaceOnUse" x1="0" y1="959" x2="0" y2="1141">
<stop offset="0" stop-color="#fff" stop-opacity="0"/><stop offset="0.1" stop-color="#fff" stop-opacity="0.1"/><stop offset="0.17" stop-color="#fff" stop-opacity="0.25"/><stop offset="0.28" stop-color="#fff" stop-opacity="0.42"/><stop offset="0.33" stop-color="#fff" stop-opacity="0.95"/><stop offset="0.45" stop-color="#fff" stop-opacity="0.9"/><stop offset="0.55" stop-color="#fff" stop-opacity="0.3"/><stop offset="0.64" stop-color="#fff" stop-opacity="0"/><stop offset="1" stop-color="#fff" stop-opacity="0"/>
</linearGradient>
<linearGradient id="floorwh" gradientUnits="userSpaceOnUse" x1="700" y1="0" x2="1350" y2="0">
<stop offset="0" stop-color="#000"/><stop offset="1" stop-color="#fff"/>
</linearGradient>
<linearGradient id="outw" gradientUnits="userSpaceOnUse" x1="0" y1="1008" x2="0" y2="1070"><stop offset="0" stop-color="#fff" stop-opacity="0"/><stop offset="0.12" stop-color="#fff" stop-opacity="0.85"/><stop offset="0.6" stop-color="#fff" stop-opacity="0.8"/><stop offset="1" stop-color="#fff" stop-opacity="0"/></linearGradient>
<mask id="wmask" maskUnits="userSpaceOnUse" x="0" y="0" width="1966" height="1182"><rect x="0" y="900" width="1966" height="282" fill="url(#floorwh)"/></mask>
<linearGradient id="legR" gradientUnits="userSpaceOnUse" x1="1140" y1="0" x2="1330" y2="0">
<stop offset="0" stop-color="#141414"/><stop offset="0.1" stop-color="#2c2c2c"/><stop offset="0.22" stop-color="#3a3a3a"/><stop offset="0.36" stop-color="#262626"/><stop offset="0.45" stop-color="#0a0a0a"/><stop offset="0.62" stop-color="#060606"/><stop offset="0.8" stop-color="#1a1a1a"/><stop offset="0.92" stop-color="#222"/><stop offset="1" stop-color="#0a0a0a"/>
</linearGradient>
<linearGradient id="legL" gradientUnits="userSpaceOnUse" x1="810" y1="0" x2="990" y2="0">
<stop offset="0" stop-color="#101010"/><stop offset="0.12" stop-color="#2a2a2a"/><stop offset="0.3" stop-color="#3c3c3c"/><stop offset="0.42" stop-color="#262626"/><stop offset="0.52" stop-color="#0a0a0a"/><stop offset="0.75" stop-color="#0c0c0c"/><stop offset="1" stop-color="#050505"/>
</linearGradient>
<filter id="bl4" x="-0.2" y="-0.2" width="1.4" height="1.4"><feGaussianBlur stdDeviation="4"/></filter>
<filter id="bl2" x="-0.2" y="-0.2" width="1.4" height="1.4"><feGaussianBlur stdDeviation="2.2"/></filter>
<clipPath id="cRL"><polygon points="1137.0,674.0 1145.0,660.0 1152.0,598.0 1157.0,498.0 1162.0,380.0 1163.0,267.0 1159.5,184.0 1157.0,169.0 1194.0,147.0 1262.5,143.5 1330.0,155.0 1328.0,174.0 1321.0,277.0 1307.0,392.0 1292.0,508.0 1289.5,603.0 1304.0,660.0 1314.0,679.0 1330.0,712.0 1327.0,740.0 1304.0,767.0 1263.0,728.0 1210.0,695.0"/></clipPath>
<clipPath id="cLL"><polygon points="807.8,735.5 812.0,714.0 819.7,672.0 822.6,596.0 824.7,511.4 826.8,427.0 826.8,342.0 826.8,331.7 843.8,326.0 907.0,327.5 989.6,334.7 987.5,344.4 970.6,431.0 949.5,520.0 934.7,604.4 932.6,672.0 943.0,714.4 953.7,731.0 946.0,735.0 900.8,805.6 870.0,769.5 815.0,741.0"/></clipPath>
<filter id="nz" x="0" y="0" width="1" height="1"><feTurbulence type="fractalNoise" baseFrequency="0.035 0.07" numOctaves="3" seed="5"/><feColorMatrix type="matrix" values="0 0 0 0 0.8  0 0 0 0 0.8  0 0 0 0 0.8  4 0 0 0 -2.45"/></filter>
<filter id="nz2" x="0" y="0" width="1" height="1"><feTurbulence type="fractalNoise" baseFrequency="0.02 0.05" numOctaves="2" seed="9"/><feColorMatrix type="matrix" values="0 0 0 0 0.45  0 0 0 0 0.45  0 0 0 0 0.45  3 0 0 0 -1.75"/></filter>
<clipPath id="cAll"><polygon points="807.8,735.5 812.0,714.0 819.7,672.0 822.6,596.0 824.7,511.4 826.8,427.0 826.8,342.0 826.8,331.7 843.8,326.0 907.0,327.5 989.6,334.7 987.5,344.4 970.6,431.0 949.5,520.0 934.7,604.4 932.6,672.0 943.0,714.4 953.7,731.0 946.0,735.0 900.8,805.6 870.0,769.5 815.0,741.0"/><polygon points="784.8,732.0 809.0,736.0 844.4,755.0 882.0,785.0 898.5,806.6 923.0,765.0 946.0,729.5 949.8,725.9 975.7,757.6 1010.0,803.6 1007.0,820.9 1018.8,842.4 1004.5,852.5 981.0,856.8 923.9,854.0 915.0,850.0 866.0,880.0 842.0,918.7 823.0,962.0 811.7,1002.0 808.8,1019.4 757.8,1021.8 676.6,1024.5 568.0,1024.5 516.0,1021.8 473.5,1025.5 479.0,1004.0 492.5,985.3 562.9,958.0 611.6,933.9 644.0,916.0 676.6,901.4 678.0,908.0 698.0,882.0 714.5,874.0 728.0,833.7 741.5,798.5 763.0,766.0"/><polygon points="915.0,851.0 886.5,875.5 900.9,907.0 912.4,938.8 918.0,956.0 922.0,992.0 960.0,992.0 960.0,927.0 964.0,913.0 975.7,884.0 992.0,855.0"/><polygon points="1137.0,674.0 1145.0,660.0 1152.0,598.0 1157.0,498.0 1162.0,380.0 1163.0,267.0 1159.5,184.0 1157.0,169.0 1194.0,147.0 1262.5,143.5 1330.0,155.0 1328.0,174.0 1321.0,277.0 1307.0,392.0 1292.0,508.0 1289.5,603.0 1304.0,660.0 1314.0,679.0 1330.0,712.0 1327.0,740.0 1304.0,767.0 1263.0,728.0 1210.0,695.0"/><polygon points="1135.0,671.0 1167.0,677.5 1220.0,701.0 1262.0,726.0 1302.0,762.0 1321.3,734.6 1324.5,713.5 1312.8,683.8 1304.4,669.0 1312.8,669.0 1331.9,696.5 1350.9,730.4 1376.3,793.8 1373.0,817.0 1384.8,838.0 1378.4,848.8 1357.3,856.0 1336.0,842.0 1324.5,845.6 1303.0,859.5 1280.5,897.0 1258.0,934.0 1243.0,993.5 1241.4,1049.0 1200.0,1055.0 1151.0,1061.0 1084.6,1064.6 1010.6,1066.0 932.0,1062.7 870.0,1059.0 810.5,1069.0 814.0,1047.0 823.4,1019.0 839.8,1000.4 893.6,970.0 940.4,939.6 998.9,911.5 1038.7,892.8 1031.0,883.7 1061.8,857.0 1063.0,830.0 1067.5,806.5 1087.6,757.9 1103.5,719.8 1122.5,681.7"/><polygon points="1343.7,854.0 1317.7,908.0 1308.4,975.0 1299.0,1038.0 1285.0,1043.0 1269.3,1043.7 1256.3,975.0 1267.4,926.5 1280.5,897.0 1303.0,859.5 1328.8,842.8"/></clipPath>
<clipPath id="cRB"><polygon points="1135.0,671.0 1167.0,677.5 1220.0,701.0 1262.0,726.0 1302.0,762.0 1321.3,734.6 1324.5,713.5 1312.8,683.8 1304.4,669.0 1312.8,669.0 1331.9,696.5 1350.9,730.4 1376.3,793.8 1373.0,817.0 1384.8,838.0 1378.4,848.8 1357.3,856.0 1336.0,842.0 1324.5,845.6 1303.0,859.5 1280.5,897.0 1258.0,934.0 1243.0,993.5 1241.4,1049.0 1200.0,1055.0 1151.0,1061.0 1084.6,1064.6 1010.6,1066.0 932.0,1062.7 870.0,1059.0 810.5,1069.0 814.0,1047.0 823.4,1019.0 839.8,1000.4 893.6,970.0 940.4,939.6 998.9,911.5 1038.7,892.8 1031.0,883.7 1061.8,857.0 1063.0,830.0 1067.5,806.5 1087.6,757.9 1103.5,719.8 1122.5,681.7"/></clipPath>
<clipPath id="cLB"><polygon points="784.8,732.0 809.0,736.0 844.4,755.0 882.0,785.0 898.5,806.6 923.0,765.0 946.0,729.5 949.8,725.9 975.7,757.6 1010.0,803.6 1007.0,820.9 1018.8,842.4 1004.5,852.5 981.0,856.8 923.9,854.0 915.0,850.0 866.0,880.0 842.0,918.7 823.0,962.0 811.7,1002.0 808.8,1019.4 757.8,1021.8 676.6,1024.5 568.0,1024.5 516.0,1021.8 473.5,1025.5 479.0,1004.0 492.5,985.3 562.9,958.0 611.6,933.9 644.0,916.0 676.6,901.4 678.0,908.0 698.0,882.0 714.5,874.0 728.0,833.7 741.5,798.5 763.0,766.0"/></clipPath>
</defs>
<g clip-path="url(#vpclip)">
<rect x="66" y="74" width="1736" height="1067" fill="#a4a4a4"/>
<rect x="66" y="926" width="1736" height="21" fill="#464646"/>
<rect x="1012" y="934.9" width="215" height="2" fill="#909090"/>
<rect x="1062" y="935.9" width="67" height="1" fill="#909090"/>
<rect x="556" y="928.2" width="48" height="2" fill="#b4b4b4"/>
<rect x="1180" y="944.3" width="153" height="1" fill="#a6a6a6"/>
<rect x="128" y="941.9" width="37" height="1" fill="#a6a6a6"/>
<rect x="597" y="940.9" width="148" height="1" fill="#a6a6a6"/>
<rect x="906" y="938.3" width="162" height="1.5" fill="#909090"/>
<rect x="997" y="934.0" width="216" height="1.5" fill="#b4b4b4"/>
<rect x="425" y="932.3" width="88" height="1" fill="#b4b4b4"/>
<rect x="1523" y="933.9" width="107" height="1" fill="#b4b4b4"/>
<rect x="1666" y="930.4" width="40" height="2" fill="#909090"/>
<rect x="1024" y="934.3" width="70" height="1.5" fill="#bcbcbc"/>
<rect x="608" y="928.1" width="223" height="1" fill="#b4b4b4"/>
<rect x="196" y="931.1" width="42" height="1" fill="#909090"/>
<rect x="351" y="939.1" width="132" height="2" fill="#a6a6a6"/>
<rect x="223" y="938.4" width="114" height="1" fill="#a6a6a6"/>
<rect x="1744" y="931.5" width="191" height="1" fill="#bcbcbc"/>
<rect x="718" y="930.4" width="201" height="1" fill="#b4b4b4"/>
<rect x="396" y="944.8" width="82" height="1.5" fill="#bcbcbc"/>
<rect x="148" y="933.6" width="72" height="1" fill="#a6a6a6"/>
<rect x="678" y="937.6" width="121" height="1" fill="#909090"/>
<rect x="341" y="942.5" width="61" height="1" fill="#a6a6a6"/>
<rect x="298" y="939.9" width="156" height="2" fill="#a6a6a6"/>
<rect x="1090" y="942.8" width="114" height="1" fill="#b4b4b4"/>
<rect x="1730" y="927.2" width="78" height="1.5" fill="#909090"/>
<rect x="1627" y="934.3" width="128" height="1" fill="#a6a6a6"/>
<rect x="869" y="928.8" width="161" height="1.5" fill="#b4b4b4"/>
<rect x="1645" y="930.4" width="180" height="1.5" fill="#b4b4b4"/>
<rect x="459" y="934.1" width="39" height="1.5" fill="#bcbcbc"/>
<rect x="1748" y="936.3" width="48" height="2" fill="#a6a6a6"/>
<rect x="1185" y="944.6" width="168" height="1" fill="#a6a6a6"/>
<rect x="861" y="943.6" width="101" height="1" fill="#bcbcbc"/>
<rect x="1148" y="926.9" width="126" height="1.5" fill="#bcbcbc"/>
<rect x="145" y="929.0" width="121" height="1" fill="#bcbcbc"/>
<rect x="1328" y="943.2" width="171" height="1.5" fill="#bcbcbc"/>
<rect x="858" y="928.1" width="46" height="1" fill="#909090"/>
<rect x="1036" y="942.5" width="155" height="2" fill="#909090"/>
<rect x="1100" y="937.3" width="46" height="1.5" fill="#b4b4b4"/>
<rect x="1312" y="942.8" width="108" height="2" fill="#909090"/>
<rect x="979" y="935.1" width="134" height="1.5" fill="#b4b4b4"/>
<rect x="872" y="937.6" width="76" height="2" fill="#b4b4b4"/>
<rect x="1191" y="940.9" width="127" height="1.5" fill="#b4b4b4"/>
<rect x="1223" y="932.1" width="71" height="1.5" fill="#a6a6a6"/>
<rect x="803" y="938.7" width="208" height="2" fill="#bcbcbc"/>
<rect x="369" y="938.8" width="116" height="1" fill="#a6a6a6"/>
<rect x="1054" y="933.6" width="93" height="1" fill="#a6a6a6"/>
<rect x="1506" y="935.7" width="200" height="1.5" fill="#b4b4b4"/>
<rect x="217" y="941.7" width="124" height="2" fill="#a6a6a6"/>
<rect x="942" y="933.6" width="164" height="1.5" fill="#909090"/>
<rect x="72" y="927.9" width="205" height="1.5" fill="#b4b4b4"/>
<rect x="566" y="937.1" width="188" height="1" fill="#b4b4b4"/>
<rect x="354" y="934.0" width="184" height="1" fill="#bcbcbc"/>
<rect x="1434" y="940.9" width="227" height="2" fill="#b4b4b4"/>
<rect x="969" y="928.5" width="158" height="1" fill="#bcbcbc"/>
<rect x="371" y="939.2" width="125" height="1" fill="#a6a6a6"/>
<rect x="968" y="940.5" width="37" height="1.5" fill="#a6a6a6"/>
<rect x="977" y="940.9" width="219" height="2" fill="#a6a6a6"/>
<rect x="1262" y="942.2" width="75" height="2" fill="#909090"/>
<rect x="823" y="928.9" width="155" height="2" fill="#b4b4b4"/>
<rect x="1178" y="936.7" width="131" height="2" fill="#bcbcbc"/>
<rect x="1765" y="932.5" width="50" height="1" fill="#b4b4b4"/>
<rect x="711" y="931.0" width="48" height="1.5" fill="#bcbcbc"/>
<rect x="1295" y="931.3" width="33" height="1" fill="#b4b4b4"/>
<rect x="996" y="934.7" width="184" height="1" fill="#909090"/>
<rect x="1560" y="930.5" width="116" height="1" fill="#b4b4b4"/>
<rect x="1238" y="936.4" width="213" height="1" fill="#909090"/>
<rect x="1619" y="945.0" width="134" height="2" fill="#909090"/>
<rect x="1243" y="937.2" width="182" height="1.5" fill="#909090"/>
<rect x="1016" y="941.9" width="63" height="1.5" fill="#bcbcbc"/>
<rect x="1716" y="938.9" width="204" height="1.5" fill="#a6a6a6"/>
<rect x="1740" y="942.2" width="135" height="1" fill="#909090"/>
<rect x="219" y="934.1" width="31" height="1" fill="#909090"/>
<rect x="94" y="936.5" width="213" height="2" fill="#b4b4b4"/>
<rect x="313" y="928.2" width="216" height="2" fill="#909090"/>
<rect x="1441" y="943.5" width="111" height="2" fill="#a6a6a6"/>
<rect x="621" y="935.6" width="210" height="1.5" fill="#909090"/>
<rect x="763" y="928.5" width="36" height="1" fill="#bcbcbc"/>
<rect x="1756" y="939.5" width="37" height="1" fill="#a6a6a6"/>
<rect x="522" y="926.7" width="175" height="2" fill="#a6a6a6"/>
<rect x="1317" y="928.4" width="55" height="1" fill="#bcbcbc"/>
<rect x="1580" y="939.5" width="35" height="1" fill="#909090"/>
<rect x="1554" y="936.5" width="137" height="1" fill="#a6a6a6"/>
<rect x="1105" y="942.2" width="201" height="1.5" fill="#a6a6a6"/>
<rect x="578" y="943.2" width="93" height="1" fill="#a6a6a6"/>
<rect x="362" y="940.9" width="49" height="1" fill="#a6a6a6"/>
<rect x="478" y="939.9" width="49" height="1" fill="#909090"/>
<rect x="1134" y="930.2" width="190" height="1" fill="#b4b4b4"/>
<rect x="653" y="937.0" width="194" height="1" fill="#bcbcbc"/>
<rect x="1146" y="939.5" width="99" height="1" fill="#a6a6a6"/>
<rect x="59" y="935.4" width="182" height="1" fill="#909090"/>
<rect x="66" y="946.5" width="1736" height="14" fill="#000"/>
<rect x="66" y="948.5" width="1736" height="0.7" fill="#8a8a8a"/>
<rect x="66" y="951.5" width="1736" height="0.8" fill="#333"/>
<rect x="66" y="954.5" width="1736" height="0.8" fill="#2a2a2a"/>
<rect x="66" y="957" width="1736" height="0.8" fill="#222"/>
<rect x="66" y="959" width="1736" height="182" fill="url(#floorg)"/>
<rect x="66" y="959" width="1736" height="182" fill="url(#floorwv)" mask="url(#wmask)"/>
<line x1="66" y1="956" x2="545" y2="1007" stroke="#484848" stroke-width="1.6"/>
<line x1="66" y1="988.5" x2="700" y2="981" stroke="#555" stroke-width="1.1"/>
<line x1="1300" y1="971" x2="1802" y2="988" stroke="#444" stroke-width="1" opacity="0.7"/>
<line x1="66" y1="1052.4" x2="1802" y2="1008.6" stroke="#383838" stroke-width="2.4"/>
<line x1="690" y1="1017.5" x2="1802" y2="1115" stroke="#3a3a3a" stroke-width="1.6"/>
<polygon points="807.8,735.5 812.0,714.0 819.7,672.0 822.6,596.0 824.7,511.4 826.8,427.0 826.8,342.0 826.8,331.7 843.8,326.0 907.0,327.5 989.6,334.7 987.5,344.4 970.6,431.0 949.5,520.0 934.7,604.4 932.6,672.0 943.0,714.4 953.7,731.0 946.0,735.0 900.8,805.6 870.0,769.5 815.0,741.0" fill="#0b0b0b"/>
<g clip-path="url(#cLL)"><g filter="url(#bl4)">
<polygon points="838.0,332.6 837.8,353.8 837.5,375.1 837.2,396.4 836.9,417.6 836.3,438.9 835.5,460.1 834.7,481.3 833.9,502.6 833.1,523.8 832.3,545.1 831.6,566.3 830.8,587.6 830.0,608.9 829.2,630.1 828.4,651.4 827.5,672.7 824.3,693.6 821.0,714.5 818.0,735.2 860.3,733.9 859.0,714.1 859.7,693.4 860.3,672.7 861.1,651.6 861.8,630.4 862.6,609.3 864.0,588.2 865.7,567.2 867.3,546.2 868.9,525.1 870.8,504.1 872.9,483.2 875.0,462.2 877.1,441.3 878.9,420.3 880.3,399.3 881.8,378.3 883.2,357.3 884.7,336.3" fill="#454545"/>
<polygon points="849.3,333.5 848.7,354.7 848.2,375.9 847.6,397.1 847.1,418.3 846.2,439.5 845.0,460.6 843.9,481.8 842.8,503.0 841.7,524.1 840.8,545.3 839.8,566.5 838.8,587.8 837.9,609.0 837.1,630.2 836.3,651.4 835.4,672.7 832.8,693.5 830.2,714.4 828.2,734.9 845.7,734.3 845.9,714.3 847.5,693.5 849.0,672.7 849.8,651.5 850.6,630.3 851.3,609.1 852.6,588.0 853.9,566.9 855.2,545.8 856.6,524.7 858.1,503.6 859.7,482.6 861.4,461.5 863.0,440.5 864.4,419.4 865.5,398.3 866.5,377.2 867.5,356.1 868.6,335.0" fill="#525252"/>
<polygon points="916.8,338.8 914.6,359.7 912.3,380.5 910.1,401.4 907.8,422.2 905.1,443.0 902.2,463.7 899.3,484.5 896.3,505.2 893.7,526.0 891.4,546.9 889.2,567.8 886.9,588.7 885.1,609.6 884.3,630.6 883.6,651.7 883.0,672.7 884.1,693.3 885.2,713.9 889.5,733.0 907.0,732.4 900.9,713.7 898.7,693.2 896.6,672.7 897.1,651.8 897.8,630.8 898.5,609.8 900.7,588.9 903.3,568.1 905.9,547.3 908.5,526.5 911.6,505.8 915.1,485.2 918.5,464.6 922.0,444.0 925.2,423.3 927.9,402.6 930.6,381.8 933.4,361.1 936.1,340.3" fill="#262626"/>
</g></g>
<polygon points="915.0,851.0 886.5,875.5 900.9,907.0 912.4,938.8 918.0,956.0 922.0,992.0 960.0,992.0 960.0,927.0 964.0,913.0 975.7,884.0 992.0,855.0" fill="#060606"/>
<polygon points="784.8,732.0 809.0,736.0 844.4,755.0 882.0,785.0 898.5,806.6 923.0,765.0 946.0,729.5 949.8,725.9 975.7,757.6 1010.0,803.6 1007.0,820.9 1018.8,842.4 1004.5,852.5 981.0,856.8 923.9,854.0 915.0,850.0 866.0,880.0 842.0,918.7 823.0,962.0 811.7,1002.0 808.8,1019.4 757.8,1021.8 676.6,1024.5 568.0,1024.5 516.0,1021.8 473.5,1025.5 479.0,1004.0 492.5,985.3 562.9,958.0 611.6,933.9 644.0,916.0 676.6,901.4 678.0,908.0 698.0,882.0 714.5,874.0 728.0,833.7 741.5,798.5 763.0,766.0" fill="#0a0a0a"/>
<g clip-path="url(#cLB)"><g fill="none" stroke-linecap="round" filter="url(#bl2)">
<path d="M744.5 805.5L746.3 805.8L750.0 806.5L755.6 807.6L762.9 808.9L771.0 811.5L779.8 815.2L789.4 820.0L799.6 826.0L809.3 832.5L818.5 839.7L827.2 847.3L835.2 855.5L842.7 862.8L849.4 869.3L855.5 875.0L860.9 879.8L865.0 883.4L867.6 885.8L869.0 887.0" stroke="#707070" stroke-width="6" opacity="0.7"/>
<path d="M717.5 882.7L719.3 883.3L723.0 884.4L728.6 886.2L735.9 888.5L743.7 891.8L751.8 896.0L760.3 901.2L769.1 907.3L777.5 913.9L785.3 921.1L792.6 928.7L799.3 936.8L805.3 944.3L810.3 951.0L814.6 957.1L817.9 962.5L820.5 966.6L822.2 969.2L823.0 970.6" stroke="#808080" stroke-width="6" opacity="0.7"/>
<path d="M790.8 744.0L792.3 744.2L795.3 744.8L799.9 745.5L805.9 746.5L812.7 748.4L820.1 751.3L828.3 755.1L837.1 759.9L846.1 765.3L855.2 771.4L864.5 778.2L873.9 785.8L881.0 791.4L885.6 795.1L888.0 797.0" stroke="#555" stroke-width="10" opacity="0.7"/>
<path d="M800 745L770 800" stroke="#5a5a5a" stroke-width="10" opacity="0.8"/>
<path d="M520 992L650 930" stroke="#4a3e3a" stroke-width="8" opacity="0.7"/>
<path d="M935 760L975 800" stroke="#3a3a3a" stroke-width="10" opacity="0.8"/>
<path d="M700 925L760 960" stroke="#4a4a4a" stroke-width="8" opacity="0.8"/>
</g></g>
<g clip-path="url(#cLB)"><rect x="470" y="720" width="560" height="310" filter="url(#nz)" opacity="0.38"/></g>
<g clip-path="url(#cLL)"><rect x="800" y="320" width="200" height="500" filter="url(#nz2)" opacity="0.22"/></g>
<g fill="none" stroke="#72eeb4" stroke-linejoin="round" stroke-linecap="round">
<path stroke-width="1" stroke-opacity="0.95" d="M826.8 342.3L843.8 337.2L907.2 338.9L958.0 342.3L987.5 344.4M826.8 414.2L839.5 410.8L886.0 413.3L943.0 420.5L970.6 426.8M824.7 500.8L835.3 497.9L881.8 499.6L928.3 511.4L949.5 519.9M822.6 591.8L833.2 589.6L873.4 591.8L911.4 598.0L934.7 604.4M819.7 672.0L826.8 670.0L867.0 671.2L903.0 674.2L932.6 675.5M810.8 727.0L869.0 739.7L920.0 741.9L945.0 727.0M843.8 326.2L839.5 410.8L835.3 497.9L833.2 589.6L826.8 670.0L815.0 727.0M907.2 327.5L886.0 413.3L881.8 499.6L873.4 591.8L867.0 671.2L869.0 739.7L872.0 765.0M958.0 342.3L943.0 420.5L928.3 511.4L911.4 598.0L903.0 674.2L920.0 741.9L915.0 780.0M972.0 334.0L955.0 422.8L937.0 515.0L922.0 601.0L918.0 674.0L932.0 735.0M779.6 740.0L785.6 741.0L791.7 742.0L797.7 743.3L803.5 745.2L809.2 747.4L814.8 750.0L820.2 752.7L825.6 755.7L830.9 758.8L836.1 762.0L841.2 765.4L846.2 769.0L851.1 772.6L855.9 776.4L860.7 780.3L865.4 784.2L870.0 788.3L874.4 792.4L878.8 796.7L883.0 801.2L886.9 805.9L890.8 810.6L894.6 815.4M769.6 755.3L775.8 756.3L782.0 757.4L788.1 758.7L794.0 760.6L799.8 762.9L805.5 765.5L811.1 768.3L816.6 771.3L822.0 774.5L827.2 777.9L832.4 781.4L837.5 785.1L842.4 788.9L847.3 792.8L852.0 796.9L856.7 801.0L861.3 805.2L865.9 809.5L870.4 813.8L874.7 818.3L878.9 823.0L883.0 827.6L887.1 832.3M756.7 775.2L763.0 776.4L769.3 777.5L775.6 778.8L781.7 780.7L787.6 783.1L793.5 785.8L799.2 788.7L804.8 791.8L810.3 795.1L815.7 798.6L821.0 802.2L826.1 806.1L831.1 810.0L836.0 814.2L840.7 818.5L845.4 822.9L850.1 827.3L854.7 831.8L859.3 836.2L863.9 840.7L868.4 845.2L872.9 849.8L877.4 854.3M746.7 790.5L753.1 791.7L759.6 792.9L766.0 794.2L772.2 796.2L778.3 798.6L784.2 801.3L790.0 804.3L795.7 807.5L801.4 810.8L806.8 814.5L812.2 818.2L817.4 822.2L822.4 826.3L827.4 830.6L832.1 835.1L836.7 839.7L841.4 844.3L846.1 848.8L850.8 853.4L855.6 857.9L860.3 862.3L865.1 866.8L869.9 871.2M784.8 732.0 L741.5 798.5M802.7 735.3 L760.9 802.3M825.0 744.6 L785.3 812.4M840.7 753.7 L802.2 822.7M855.6 764.1 L817.9 834.8M869.9 775.5 L832.2 848.5M887.4 792.2 L851.2 866.8M898.5 806.6 L866.0 880.0M738.8 806.2L745.2 807.5L751.7 808.8L758.1 810.2L764.3 812.2L770.4 814.6L776.3 817.4L782.1 820.4L787.8 823.7L793.4 827.0L798.9 830.7L804.2 834.5L809.4 838.6L814.4 842.8L819.3 847.2L823.9 851.8L828.5 856.5L833.1 861.1L837.8 865.8L842.4 870.4L847.1 874.9L851.9 879.4L856.6 883.9L861.4 888.4M733.4 821.7L739.7 823.1L746.0 824.5L752.3 825.9L758.4 828.0L764.4 830.5L770.2 833.3L775.9 836.4L781.5 839.6L787.0 843.0L792.3 846.7L797.5 850.5L802.5 854.6L807.4 858.8L812.2 863.2L816.7 867.8L821.1 872.5L825.6 877.2L830.0 881.8L834.4 886.5L838.9 891.2L843.3 895.8L847.8 900.4L852.2 905.1M728.0 837.1L734.2 838.6L740.3 840.2L746.5 841.7L752.5 843.9L758.3 846.4L764.1 849.2L769.6 852.3L775.1 855.6L780.5 859.0L785.6 862.7L790.8 866.5L795.6 870.6L800.4 874.8L805.0 879.2L809.4 883.8L813.7 888.5L818.0 893.2L822.3 897.9L826.5 902.7L830.7 907.4L834.8 912.2L838.9 917.0L843.0 921.8M722.6 852.5L728.6 854.2L734.7 855.9L740.7 857.5L746.6 859.8L752.3 862.3L757.9 865.1L763.4 868.3L768.7 871.6L774.0 875.0L779.0 878.7L784.0 882.5L788.8 886.6L793.5 890.8L797.9 895.2L802.2 899.8L806.3 904.5L810.4 909.2L814.5 914.0L818.5 918.8L822.5 923.7L826.3 928.6L830.0 933.6L833.8 938.5M717.7 866.4L723.7 868.2L729.6 870.0L735.5 871.8L741.3 874.0L746.9 876.6L752.4 879.4L757.7 882.6L763.0 885.9L768.1 889.4L773.1 893.1L778.0 896.9L782.6 901.0L787.2 905.2L791.5 909.6L795.7 914.2L799.7 918.9L803.6 923.7L807.6 928.5L811.4 933.3L815.1 938.3L818.6 943.4L822.1 948.5L825.5 953.6M741.5 798.5 L714.5 875.7M760.9 802.3 L732.1 881.2M779.4 809.4 L748.8 889.0M796.7 819.0 L764.2 899.0M812.8 830.6 L778.5 910.6M822.8 839.1 L787.2 919.2M836.9 853.1 L799.1 933.3M851.2 866.8 L810.1 948.0M866.0 880.0 L820.0 963.6M708.8 880.8L714.4 883.6L720.0 886.4L725.8 889.1L731.6 892.1L737.4 895.2L743.1 898.5L748.6 902.2L753.7 906.2L758.6 910.4L762.9 914.9L766.7 919.6L770.1 924.3L773.6 929.2L778.0 934.0L782.8 938.1L787.6 942.2L792.3 946.2L796.9 950.2L801.4 954.3L805.8 958.4L810.1 962.6L814.2 966.8L818.4 971.0M699.3 889.2L704.5 893.7L709.7 898.1L715.3 902.3L721.3 906.4L727.5 910.3L733.7 914.3L739.5 918.9L744.7 923.9L749.2 929.4L752.5 935.4L754.7 941.3L756.1 947.2L757.9 953.3L762.6 958.6L768.7 962.0L774.8 964.9L780.8 967.7L786.8 970.4L792.8 973.1L798.6 975.6L804.3 978.2L810.0 980.8L815.6 983.4M689.9 897.7L694.6 903.8L699.3 909.8L704.9 915.4L711.1 920.6L717.7 925.4L724.4 930.1L730.4 935.5L735.7 941.7L739.8 948.5L742.1 955.8L742.7 963.1L742.2 970.1L742.3 977.4L747.2 983.2L754.6 985.9L762.0 987.6L769.4 989.2L776.8 990.6L784.1 991.8L791.4 992.9L798.6 993.9L805.7 994.8L812.9 995.7M681.1 905.4L685.5 913.0L689.8 920.6L695.3 927.5L701.6 933.7L708.6 939.3L715.7 944.6L722.1 950.9L727.3 958.0L731.2 966.0L732.5 974.5L731.7 983.1L729.3 991.2L727.8 999.5L733.1 1005.9L741.6 1007.9L750.2 1008.6L758.9 1009.0L767.6 1009.2L776.2 1009.1L784.8 1008.7L793.3 1008.3L801.8 1007.7L810.3 1007.1M714.5 875.7 L676.6 909.5M732.1 881.2 L690.2 933.8M748.8 889.0 L711.2 952.2M764.2 899.0 L726.7 975.1M778.5 910.6 L722.6 1002.2M787.2 919.2 L725.7 1017.7M799.1 933.3 L753.4 1019.3M810.1 948.0 L781.3 1017.0M820.0 963.6 L809.0 1013.0M666.8 912.2L669.1 917.0L671.4 921.9L673.7 926.8L676.3 931.5L679.2 936.0L682.3 940.3L685.7 944.4L689.3 948.3L693.0 951.9L696.7 955.8L700.2 959.9L703.4 964.1L706.3 968.7L708.9 973.4L710.9 978.4L712.1 983.6L712.1 989.0L711.5 994.2L710.3 999.5L708.2 1004.4L706.1 1009.4L704.1 1014.4L702.0 1019.3M656.9 914.8L659.1 919.5L661.2 924.2L663.3 928.8L665.5 933.4L667.9 937.9L670.4 942.3L673.0 946.6L675.7 950.8L678.6 954.8L681.5 958.9L684.4 963.0L687.3 967.2L690.1 971.5L692.7 975.9L694.9 980.5L696.5 985.3L697.0 990.3L696.9 995.4L696.2 1000.4L694.5 1005.2L692.9 1010.0L691.2 1014.8L689.5 1019.7M676.6 909.5 L646.8 917.6M690.5 934.1 L656.2 939.9M707.5 949.1 L663.7 957.7M725.1 970.9 L676.1 978.4M726.0 993.1 L681.9 996.5M714.5 1019.0 L676.6 1020.0M490.6 989.2L497.7 986.8L504.8 984.3L511.8 981.8L518.9 979.4L526.0 976.9L533.0 974.5L540.1 972.1L547.1 969.6L554.1 967.1L561.1 964.5L568.1 961.9L575.0 959.1L581.9 956.4L588.7 953.4L595.5 950.5L602.3 947.5L609.1 944.5L615.9 941.4L622.6 938.3L629.3 935.1L636.0 931.9L642.8 928.8L649.8 927.9M487.9 995.1L495.2 992.9L502.6 990.8L509.9 988.6L517.3 986.5L524.6 984.4L532.0 982.4L539.3 980.3L546.7 978.3L554.0 976.2L561.2 974.1L568.5 972.0L575.7 969.7L583.0 967.5L590.1 965.0L597.3 962.6L604.4 960.1L611.6 957.6L618.7 955.0L625.7 952.3L632.8 949.6L639.9 946.8L647.0 944.3L654.2 943.5M484.7 1001.8L492.4 999.9L500.1 998.1L507.8 996.3L515.4 994.5L523.1 992.8L530.8 991.2L538.5 989.7L546.1 988.1L553.8 986.6L561.4 985.0L569.1 983.4L576.6 981.7L584.2 980.0L591.8 978.2L599.3 976.3L606.8 974.4L614.3 972.4L621.8 970.4L629.3 968.2L636.7 966.0L644.2 963.8L651.7 961.7L659.3 961.0M481.4 1008.8L489.4 1007.4L497.4 1005.9L505.5 1004.4L513.5 1003.1L521.5 1001.8L529.6 1000.6L537.6 999.6L545.6 998.6L553.6 997.6L561.6 996.6L569.6 995.6L577.6 994.4L585.5 993.3L593.5 992.1L601.4 990.9L609.3 989.5L617.2 988.1L625.1 986.6L633.0 985.1L640.9 983.5L648.8 981.8L656.7 980.3L664.7 979.6M478.1 1015.9L486.4 1014.8L494.8 1013.7L503.2 1012.6L511.6 1011.6L519.9 1010.7L528.3 1010.0L536.7 1009.5L545.1 1009.0L553.4 1008.6L561.8 1008.1L570.2 1007.7L578.5 1007.2L586.9 1006.6L595.2 1006.0L603.5 1005.4L611.8 1004.7L620.2 1003.8L628.5 1002.9L636.8 1002.0L645.1 1000.9L653.4 999.8L661.7 998.8L670.0 998.3M475.9 1020.6L484.4 1019.7L493.0 1018.8L501.6 1018.0L510.3 1017.3L518.9 1016.7L527.5 1016.3L536.1 1016.1L544.7 1016.0L553.3 1015.9L561.9 1015.9L570.5 1015.8L579.2 1015.6L587.8 1015.5L596.3 1015.3L604.9 1015.1L613.5 1014.7L622.1 1014.3L630.7 1013.8L639.3 1013.2L647.9 1012.5L656.4 1011.8L665.0 1011.1L673.6 1010.7M492.5 985.3 L474.0 1024.5M513.1 977.3 L500.4 1022.5M533.7 969.3 L526.8 1021.5M554.2 961.0 L553.2 1022.0M574.4 952.1 L579.7 1022.7M587.7 945.7 L597.3 1023.1M607.5 935.7 L623.7 1023.0M627.0 925.4 L650.2 1022.2M646.8 917.6 L676.6 1021.0M947.0 728.6L945.6 734.1L944.2 739.6L942.8 745.1L941.4 750.6L940.0 756.1L938.5 761.7L937.1 767.2L935.7 772.8L934.3 778.3L932.8 783.9L931.3 789.6L929.8 795.3L928.5 801.4L926.9 807.8L926.2 814.3L927.4 820.8L930.3 826.8L932.5 833.0L933.4 838.7L933.8 843.8L934.4 848.5L935.7 852.3L938.2 854.7M947.9 727.7L948.6 733.3L949.3 739.0L950.0 744.6L950.6 750.3L951.3 756.0L951.9 761.7L952.5 767.4L953.1 773.2L953.7 778.9L954.2 784.7L954.6 790.6L954.9 796.6L954.9 803.0L954.0 809.8L953.7 816.7L955.3 823.4L958.4 829.7L960.1 836.3L959.0 841.9L957.0 846.5L954.9 850.3L953.3 853.4L952.5 855.4M948.8 726.8L951.6 732.6L954.4 738.4L957.2 744.2L959.9 750.0L962.6 755.8L965.2 761.7L967.9 767.6L970.5 773.5L973.1 779.5L975.6 785.4L977.9 791.6L979.9 798.0L981.4 804.7L981.1 811.8L981.3 819.0L983.3 826.0L986.6 832.6L987.8 839.6L984.6 845.2L980.2 849.1L975.5 852.2L970.9 854.4L966.7 856.1M946.0 729.5 L949.8 725.9M935.6 745.6 L964.3 743.7M925.2 761.7 L978.6 761.7M914.9 777.8 L992.4 780.1M904.8 794.0 L1005.0 799.3M899.9 805.8 L1008.2 813.8M902.1 824.0 L1014.7 835.5M910.6 841.2 L1003.4 851.8M923.9 854.0 L981.0 856.8M930.4 851.8L925.7 856.4L921.0 861.0L916.2 865.7L912.1 870.8L909.1 876.7L907.8 883.1L908.3 889.6L910.1 895.6L911.8 901.8L913.4 907.9L915.0 914.2L916.7 920.4L918.4 926.8L920.1 933.1L921.9 939.5L923.6 945.9L925.1 952.3L926.2 958.9L927.1 965.5L927.8 972.1L928.4 978.7L929.0 985.4L929.6 992.0M945.8 852.6L941.5 857.4L937.2 862.3L932.9 867.1L929.0 872.3L926.1 878.1L924.5 884.4L924.2 890.6L924.9 896.6L925.6 902.7L926.3 908.8L927.0 914.9L927.8 921.1L929.0 927.4L930.2 933.8L931.5 940.1L932.7 946.5L933.9 952.8L934.7 959.3L935.3 965.8L935.9 972.4L936.3 978.9L936.8 985.5L937.2 992.0M961.2 853.4L957.3 858.4L953.4 863.5L949.5 868.5L946.0 873.8L943.1 879.6L941.1 885.6L940.0 891.7L939.7 897.6L939.4 903.6L939.2 909.6L938.9 915.7L939.0 921.8L939.5 928.1L940.3 934.4L941.0 940.7L941.8 947.0L942.6 953.4L943.1 959.8L943.6 966.2L943.9 972.7L944.2 979.1L944.5 985.6L944.8 992.0M976.6 854.2L973.1 859.4L969.6 864.7L966.2 869.9L962.9 875.4L960.0 881.0L957.7 886.8L955.9 892.7L954.6 898.6L953.3 904.5L952.0 910.4L950.9 916.4L950.2 922.5L950.1 928.8L950.3 935.1L950.6 941.3L951.0 947.6L951.3 953.9L951.6 960.3L951.8 966.6L952.0 972.9L952.1 979.3L952.3 985.6L952.4 992.0M915.0 851.0 L992.0 855.0M899.6 864.2 L982.8 871.4M892.4 888.5 L971.8 893.8M900.6 907.1 L964.9 911.3M907.8 926.1 L960.7 929.5M914.5 945.3 L960.1 948.2M919.8 971.8 L960.0 973.2M922.0 992.0 L960.0 992.0M473.8 1024.5L475.0 1023.5L476.2 1022.5L477.5 1021.5L478.7 1020.5L480.0 1019.4L481.2 1018.4L482.5 1017.4L483.8 1016.4L485.2 1015.5L486.5 1014.5L487.9 1013.6L489.4 1012.6L490.8 1011.7L492.3 1010.8L493.8 1009.9L495.3 1009.0L496.9 1008.2L498.4 1007.4L500.0 1006.5L501.6 1005.7L503.1 1004.8L504.7 1004.0L506.2 1003.1M473.5 1024.5 L474.0 1024.5M477.7 1009.8 L490.0 1023.1M483.6 997.8 L504.0 1022.1M492.5 985.3 L520.0 1021.0"/>
<path stroke-width="4.4" d="M784.8 732.0L786.3 732.2L789.3 732.8L793.9 733.5L799.9 734.5L806.7 736.4L814.1 739.3L822.3 743.1L831.1 747.9L840.1 753.3L849.2 759.4L858.5 766.2L867.9 773.8L876.0 780.7L882.7 787.2L888.2 793.1L892.3 798.5L895.4 802.6L897.5 805.2L898.5 806.6M741.5 798.5L743.3 798.8L747.0 799.5L752.6 800.6L759.9 801.9L768.0 804.5L776.8 808.2L786.4 813.0L796.6 819.0L806.3 825.5L815.5 832.7L824.2 840.3L832.2 848.5L839.7 855.8L846.4 862.3L852.5 868.0L857.9 872.8L862.0 876.4L864.6 878.8L866.0 880.0M714.5 875.7L716.3 876.3L720.0 877.4L725.6 879.2L732.9 881.5L740.7 884.8L748.8 889.0L757.3 894.2L766.1 900.3L774.5 906.9L782.3 914.1L789.6 921.7L796.3 929.8L802.3 937.3L807.3 944.0L811.6 950.1L814.9 955.5L817.5 959.6L819.2 962.2L820.0 963.6M676.6 909.5L677.4 911.2L679.1 914.6L681.6 919.7L685.0 926.4L689.4 932.9L694.8 938.9L701.2 944.6L708.8 950.0L715.0 955.7L720.1 961.8L724.0 968.2L726.7 975.1L727.7 982.3L727.0 989.9L724.6 997.9L720.6 1006.4L717.5 1012.7L715.5 1016.9L714.5 1019.0M646.8 917.6L647.3 918.8L648.3 921.2L649.9 924.7L651.9 929.5L654.1 934.7L656.5 940.5L659.0 946.7L661.7 953.5L664.9 960.2L668.6 967.0L672.8 973.8L677.6 980.5L680.6 987.5L682.0 994.5L681.7 1001.7L679.6 1009.0L678.1 1014.5L677.1 1018.2L676.6 1020.0M946.0 729.5L944.6 731.7L941.7 736.2L937.4 742.8L931.6 751.7L925.6 761.1L919.2 771.0L912.5 781.5L905.5 792.5L900.9 802.1L898.6 810.2L898.8 816.9L901.2 822.1L903.8 827.3L906.2 832.4L908.8 837.5L911.2 842.5L913.7 846.5L916.0 849.5L918.3 851.5L920.6 852.5L922.2 853.2L923.3 853.8L923.9 854.0"/>
<path stroke-width="2" stroke="#0a0a0a" d="M784.8 732.0L786.3 732.2L789.3 732.8L793.9 733.5L799.9 734.5L806.7 736.4L814.1 739.3L822.3 743.1L831.1 747.9L840.1 753.3L849.2 759.4L858.5 766.2L867.9 773.8L876.0 780.7L882.7 787.2L888.2 793.1L892.3 798.5L895.4 802.6L897.5 805.2L898.5 806.6M741.5 798.5L743.3 798.8L747.0 799.5L752.6 800.6L759.9 801.9L768.0 804.5L776.8 808.2L786.4 813.0L796.6 819.0L806.3 825.5L815.5 832.7L824.2 840.3L832.2 848.5L839.7 855.8L846.4 862.3L852.5 868.0L857.9 872.8L862.0 876.4L864.6 878.8L866.0 880.0M714.5 875.7L716.3 876.3L720.0 877.4L725.6 879.2L732.9 881.5L740.7 884.8L748.8 889.0L757.3 894.2L766.1 900.3L774.5 906.9L782.3 914.1L789.6 921.7L796.3 929.8L802.3 937.3L807.3 944.0L811.6 950.1L814.9 955.5L817.5 959.6L819.2 962.2L820.0 963.6M676.6 909.5L677.4 911.2L679.1 914.6L681.6 919.7L685.0 926.4L689.4 932.9L694.8 938.9L701.2 944.6L708.8 950.0L715.0 955.7L720.1 961.8L724.0 968.2L726.7 975.1L727.7 982.3L727.0 989.9L724.6 997.9L720.6 1006.4L717.5 1012.7L715.5 1016.9L714.5 1019.0M646.8 917.6L647.3 918.8L648.3 921.2L649.9 924.7L651.9 929.5L654.1 934.7L656.5 940.5L659.0 946.7L661.7 953.5L664.9 960.2L668.6 967.0L672.8 973.8L677.6 980.5L680.6 987.5L682.0 994.5L681.7 1001.7L679.6 1009.0L678.1 1014.5L677.1 1018.2L676.6 1020.0M946.0 729.5L944.6 731.7L941.7 736.2L937.4 742.8L931.6 751.7L925.6 761.1L919.2 771.0L912.5 781.5L905.5 792.5L900.9 802.1L898.6 810.2L898.8 816.9L901.2 822.1L903.8 827.3L906.2 832.4L908.8 837.5L911.2 842.5L913.7 846.5L916.0 849.5L918.3 851.5L920.6 852.5L922.2 853.2L923.3 853.8L923.9 854.0"/>
<polyline stroke-width="1.3" points="807.8,735.5 812.0,714.0 819.7,672.0 822.6,596.0 824.7,511.4 826.8,427.0 826.8,342.0 826.8,331.7 843.8,326.0 907.0,327.5 989.6,334.7 987.5,344.4 970.6,431.0 949.5,520.0 934.7,604.4 932.6,672.0 943.0,714.4 953.7,731.0"/>
<polygon stroke-width="1.6" points="915.0,851.0 886.5,875.5 900.9,907.0 912.4,938.8 918.0,956.0 922.0,992.0 960.0,992.0 960.0,927.0 964.0,913.0 975.7,884.0 992.0,855.0"/>
<polygon stroke-width="4.6" points="784.8,732.0 809.0,736.0 844.4,755.0 882.0,785.0 898.5,806.6 923.0,765.0 946.0,729.5 949.8,725.9 975.7,757.6 1010.0,803.6 1007.0,820.9 1018.8,842.4 1004.5,852.5 981.0,856.8 923.9,854.0 915.0,850.0 866.0,880.0 842.0,918.7 823.0,962.0 811.7,1002.0 808.8,1019.4 757.8,1021.8 676.6,1024.5 568.0,1024.5 516.0,1021.8 473.5,1025.5 479.0,1004.0 492.5,985.3 562.9,958.0 611.6,933.9 644.0,916.0 676.6,901.4 678.0,908.0 698.0,882.0 714.5,874.0 728.0,833.7 741.5,798.5 763.0,766.0"/>
<polygon stroke-width="2" stroke="#0a0a0a" points="784.8,732.0 809.0,736.0 844.4,755.0 882.0,785.0 898.5,806.6 923.0,765.0 946.0,729.5 949.8,725.9 975.7,757.6 1010.0,803.6 1007.0,820.9 1018.8,842.4 1004.5,852.5 981.0,856.8 923.9,854.0 915.0,850.0 866.0,880.0 842.0,918.7 823.0,962.0 811.7,1002.0 808.8,1019.4 757.8,1021.8 676.6,1024.5 568.0,1024.5 516.0,1021.8 473.5,1025.5 479.0,1004.0 492.5,985.3 562.9,958.0 611.6,933.9 644.0,916.0 676.6,901.4 678.0,908.0 698.0,882.0 714.5,874.0 728.0,833.7 741.5,798.5 763.0,766.0"/>
<polyline stroke-width="3" stroke-opacity="0.9" points="474.0,1025.5 516.0,1022.3 568.0,1025.0 676.0,1025.0 758.0,1022.5 809.0,1019.8"/>
</g>
<polygon points="1137.0,674.0 1145.0,660.0 1152.0,598.0 1157.0,498.0 1162.0,380.0 1163.0,267.0 1159.5,184.0 1157.0,169.0 1194.0,147.0 1262.5,143.5 1330.0,155.0 1328.0,174.0 1321.0,277.0 1307.0,392.0 1292.0,508.0 1289.5,603.0 1304.0,660.0 1314.0,679.0 1330.0,712.0 1327.0,740.0 1304.0,767.0 1263.0,728.0 1210.0,695.0" fill="#0a0a0a"/>
<g clip-path="url(#cRL)"><g filter="url(#bl4)">
<polygon points="1163.8,169.2 1166.6,195.7 1167.6,222.5 1168.7,249.2 1169.2,275.9 1168.9,302.6 1168.5,329.4 1168.2,356.1 1167.7,382.8 1166.5,409.6 1165.3,436.3 1164.0,463.0 1162.8,489.7 1161.5,516.4 1160.2,543.1 1158.9,569.8 1157.6,596.6 1155.1,623.1 1152.4,649.7 1144.1,674.2 1190.1,675.5 1193.1,651.0 1193.2,624.6 1193.3,598.2 1194.5,571.4 1195.6,544.6 1196.8,517.9 1198.3,491.1 1200.1,464.4 1201.9,437.7 1203.7,411.0 1205.6,384.3 1206.8,357.6 1207.9,330.9 1209.0,304.1 1210.2,277.4 1210.3,250.6 1210.1,223.9 1209.8,197.1 1208.3,170.5" fill="#424242"/>
<polygon points="1174.1,169.5 1176.6,196.1 1177.4,222.8 1178.3,249.5 1178.7,276.2 1178.1,303.0 1177.6,329.7 1177.1,356.5 1176.4,383.2 1175.1,409.9 1173.7,436.6 1172.4,463.3 1171.0,490.0 1169.6,516.8 1168.4,543.5 1167.1,570.2 1165.8,596.9 1163.9,623.5 1161.8,650.0 1154.7,674.5 1172.4,675.0 1177.5,650.5 1178.6,624.0 1179.6,597.6 1180.8,570.8 1182.0,544.1 1183.2,517.3 1184.6,490.6 1186.2,463.9 1187.8,437.2 1189.4,410.5 1191.0,383.7 1191.9,357.0 1192.8,330.3 1193.6,303.5 1194.4,276.8 1194.3,250.1 1193.8,223.3 1193.2,196.6 1191.2,170.0" fill="#505050"/>
<polygon points="1208.3,170.5 1209.8,197.1 1210.1,223.9 1210.3,250.6 1210.2,277.4 1209.0,304.1 1207.9,330.9 1206.8,357.6 1205.6,384.3 1203.7,411.0 1201.9,437.7 1200.1,464.4 1198.3,491.1 1196.8,517.9 1195.6,544.6 1194.5,571.4 1193.3,598.2 1193.2,624.6 1193.1,651.0 1190.1,675.5 1207.8,676.0 1208.8,651.6 1207.9,625.2 1207.1,598.8 1208.1,572.0 1209.2,545.2 1210.3,518.4 1211.9,491.7 1213.9,465.0 1216.0,438.3 1218.1,411.6 1220.1,384.9 1221.6,358.1 1223.1,331.4 1224.5,304.7 1225.9,278.0 1226.4,251.2 1226.4,224.4 1226.5,197.7 1225.4,171.0" fill="#2a2a2a"/>
<polygon points="1280.1,172.6 1279.6,199.4 1278.6,226.2 1277.6,253.0 1276.4,279.8 1273.9,306.5 1271.5,333.2 1269.1,360.0 1266.7,386.7 1263.9,413.4 1261.1,440.1 1258.3,466.8 1255.5,493.5 1253.7,520.2 1252.8,547.1 1251.9,573.9 1251.0,600.8 1254.9,627.0 1258.8,653.2 1264.4,677.6 1301.6,678.6 1291.7,654.4 1285.7,628.2 1279.9,602.1 1280.6,575.2 1281.4,548.3 1282.1,521.4 1284.1,494.6 1287.4,467.9 1290.7,441.3 1294.0,414.6 1297.3,387.9 1300.3,361.1 1303.4,334.4 1306.4,307.7 1309.4,281.0 1311.3,254.2 1312.9,227.3 1314.5,200.5 1316.0,173.7" fill="#232323"/>
</g></g>
<polygon points="1343.7,854.0 1317.7,908.0 1308.4,975.0 1299.0,1038.0 1285.0,1043.0 1269.3,1043.7 1256.3,975.0 1267.4,926.5 1280.5,897.0 1303.0,859.5 1328.8,842.8" fill="#060606"/>
<polygon points="1135.0,671.0 1167.0,677.5 1220.0,701.0 1262.0,726.0 1302.0,762.0 1321.3,734.6 1324.5,713.5 1312.8,683.8 1304.4,669.0 1312.8,669.0 1331.9,696.5 1350.9,730.4 1376.3,793.8 1373.0,817.0 1384.8,838.0 1378.4,848.8 1357.3,856.0 1336.0,842.0 1324.5,845.6 1303.0,859.5 1280.5,897.0 1258.0,934.0 1243.0,993.5 1241.4,1049.0 1200.0,1055.0 1151.0,1061.0 1084.6,1064.6 1010.6,1066.0 932.0,1062.7 870.0,1059.0 810.5,1069.0 814.0,1047.0 823.4,1019.0 839.8,1000.4 893.6,970.0 940.4,939.6 998.9,911.5 1038.7,892.8 1031.0,883.7 1061.8,857.0 1063.0,830.0 1067.5,806.5 1087.6,757.9 1103.5,719.8 1122.5,681.7" fill="#080808"/>
<g clip-path="url(#cRB)"><g fill="none" stroke-linecap="round" filter="url(#bl2)">
<path d="M1091.6 768.9L1093.9 769.3L1098.5 770.0L1105.5 771.2L1114.7 772.7L1124.3 775.6L1134.2 779.8L1144.5 785.4L1155.1 792.3L1165.4 799.2L1175.5 806.1L1185.2 812.9L1194.8 819.8L1203.4 827.0L1211.3 834.7L1218.4 842.8L1224.6 851.2L1229.3 857.6L1232.4 861.9L1234.0 864.0" stroke="#7a7a7a" stroke-width="8" opacity="0.7"/>
<path d="M1071.5 817.5L1073.8 817.8L1078.2 818.3L1085.0 819.1L1094.0 820.1L1103.1 822.2L1112.4 825.4L1121.8 829.7L1131.2 835.0L1140.6 840.8L1149.9 847.2L1159.0 854.1L1168.0 861.4L1176.2 868.7L1183.6 875.8L1190.2 882.8L1196.1 889.7L1200.4 894.8L1203.3 898.3L1204.8 900.0" stroke="#8a8a8a" stroke-width="8" opacity="0.7"/>
<path d="M1065.8 868.0L1067.2 868.2L1070.1 868.8L1074.3 869.5L1080.0 870.5L1086.7 872.7L1094.3 876.0L1102.9 880.5L1112.4 886.2L1122.4 892.8L1132.9 900.4L1143.8 909.0L1155.3 918.5L1166.2 927.7L1176.7 936.6L1186.7 945.2L1196.2 953.6L1203.4 959.8L1208.1 963.9L1210.5 966.0" stroke="#808080" stroke-width="9" opacity="0.7"/>
<path d="M1130 690L1104 758" stroke="#6a6a6a" stroke-width="10" opacity="0.8"/>
<path d="M890 990L1005 928" stroke="#5a4c48" stroke-width="13" opacity="0.7"/>
<path d="M1065 900L1135 940" stroke="#9a9a9a" stroke-width="9" opacity="0.7"/>
<path d="M1340 735L1368 800" stroke="#333" stroke-width="10" opacity="0.8"/>
<path d="M1150 700L1250 750" stroke="#2a2a2a" stroke-width="14" opacity="0.8"/>
</g></g>
<g clip-path="url(#cRB)"><rect x="800" y="660" width="600" height="420" filter="url(#nz)" opacity="0.42"/></g>
<g clip-path="url(#cRL)"><rect x="1130" y="140" width="210" height="640" filter="url(#nz2)" opacity="0.22"/></g>
<g fill="none" stroke="#72eeb4" stroke-linejoin="round" stroke-linecap="round">
<path stroke-width="1" stroke-opacity="0.95" d="M1157.0 184.0L1194.0 161.7L1260.0 159.0L1328.7 174.0M1163.4 267.0L1193.8 258.4L1257.6 259.8L1321.4 277.0M1162.0 380.0L1189.0 374.0L1250.0 375.0L1306.7 392.3M1157.0 497.8L1189.0 492.0L1243.0 495.4L1292.0 507.6M1152.0 598.4L1189.0 593.5L1240.4 598.4L1289.5 603.3M1144.7 660.0L1186.5 669.5L1245.0 679.0L1304.0 660.0M1193.8 147.0L1193.8 258.0L1189.0 374.0L1189.0 492.0L1189.0 593.5L1186.5 669.5L1185.0 690.0M1262.5 143.5L1257.6 259.8L1250.0 375.0L1243.0 495.4L1240.4 598.4L1245.0 679.0L1250.0 720.0M1129.3 681.4L1137.8 683.1L1146.3 684.8L1154.7 686.9L1162.9 689.6L1171.0 692.7L1179.0 696.1L1186.8 699.7L1194.6 703.4L1202.4 707.3L1210.1 711.2L1217.7 715.4L1225.2 719.7L1232.6 724.1L1239.8 728.9L1246.8 733.9L1253.7 739.0L1260.4 744.4L1267.1 749.9L1273.7 755.5L1280.1 761.3L1286.5 767.2L1292.9 773.1L1299.2 778.9M1113.7 710.1L1122.9 711.8L1132.2 713.5L1141.3 715.9L1150.2 719.1L1158.8 722.9L1167.1 727.2L1175.4 731.6L1183.6 736.2L1191.8 740.9L1199.9 745.7L1207.9 750.6L1215.6 755.9L1223.1 761.5L1230.2 767.4L1237.0 773.8L1243.8 780.2L1250.6 786.6L1257.6 792.9L1264.5 799.3L1271.3 805.8L1278.1 812.3L1284.9 818.9L1291.7 825.5M1097.1 740.5L1107.2 742.2L1117.3 744.0L1127.1 746.6L1136.7 750.4L1145.8 754.9L1154.6 760.1L1163.3 765.5L1171.9 771.0L1180.5 776.5L1189.0 782.2L1197.4 788.0L1205.5 794.3L1213.1 801.1L1220.1 808.4L1226.6 816.2L1233.3 823.8L1240.3 831.3L1247.4 838.6L1254.8 845.7L1262.0 852.9L1269.3 860.2L1276.4 867.5L1283.6 874.8M1091.4 750.9L1101.8 752.7L1112.1 754.4L1122.3 757.2L1132.0 761.1L1141.4 765.9L1150.3 771.4L1159.1 777.1L1167.9 782.9L1176.6 788.8L1185.3 794.7L1193.8 800.8L1202.0 807.4L1209.6 814.6L1216.7 822.4L1223.1 830.7L1229.8 838.8L1236.7 846.6L1244.0 854.2L1251.4 861.6L1258.9 869.1L1266.2 876.6L1273.5 884.2L1280.8 891.7M1135.0 671.0 L1087.6 757.9M1167.6 678.9 L1128.9 768.3M1198.6 691.5 L1165.2 790.8M1228.7 706.5 L1199.7 816.2M1250.3 719.3 L1220.7 840.4M1277.1 739.6 L1249.2 872.2M1302.0 762.0 L1279.0 903.0M1085.2 763.7L1095.8 765.4L1106.4 767.1L1116.8 769.9L1126.7 773.9L1136.3 778.9L1145.4 784.6L1154.4 790.5L1163.2 796.5L1172.1 802.7L1180.8 808.9L1189.4 815.4L1197.5 822.4L1205.2 829.9L1212.2 838.0L1218.7 846.6L1225.4 855.0L1232.5 863.1L1239.8 871.0L1247.3 878.7L1254.6 886.5L1261.9 894.4L1269.1 902.3L1276.2 910.3M1081.6 772.5L1092.3 774.1L1103.0 775.7L1113.4 778.4L1123.5 782.4L1133.1 787.4L1142.3 793.0L1151.3 798.9L1160.3 805.1L1169.1 811.3L1177.7 817.8L1186.3 824.4L1194.4 831.6L1202.0 839.3L1209.1 847.4L1215.7 856.0L1222.5 864.3L1229.6 872.5L1236.9 880.5L1244.3 888.4L1251.5 896.4L1258.5 904.6L1265.3 912.9L1272.1 921.2M1075.5 787.1L1086.4 788.5L1097.2 790.0L1107.8 792.7L1118.0 796.6L1127.7 801.5L1137.1 807.1L1146.3 813.1L1155.3 819.3L1164.1 825.8L1172.7 832.5L1181.1 839.5L1189.1 846.9L1196.6 854.8L1203.7 863.1L1210.6 871.6L1217.7 879.9L1224.9 888.1L1232.2 896.2L1239.4 904.5L1246.3 912.9L1252.8 921.6L1259.0 930.5L1265.2 939.4M1069.9 800.7L1080.9 802.0L1091.8 803.3L1102.5 806.0L1112.9 809.8L1122.8 814.7L1132.3 820.2L1141.6 826.2L1150.6 832.6L1159.4 839.3L1167.9 846.2L1176.2 853.5L1184.1 861.2L1191.6 869.4L1198.8 877.7L1206.0 886.1L1213.2 894.4L1220.5 902.7L1227.8 911.0L1234.8 919.5L1241.4 928.3L1247.5 937.5L1253.1 947.0L1258.8 956.4M1087.6 757.9 L1067.5 806.5M1119.0 764.2 L1100.3 811.6M1147.4 778.9 L1130.2 825.9M1174.1 796.9 L1157.4 845.0M1199.7 816.2 L1182.0 867.3M1214.4 831.7 L1196.6 884.0M1234.3 856.9 L1218.7 908.9M1256.7 879.9 L1239.4 934.9M1279.0 903.0 L1256.0 963.7M1066.8 812.6L1077.7 813.9L1088.5 815.3L1099.1 818.1L1109.3 822.0L1119.1 826.9L1128.6 832.4L1137.8 838.4L1146.7 844.7L1155.4 851.4L1163.8 858.5L1171.9 865.8L1179.8 873.4L1187.2 881.4L1194.5 889.6L1201.8 897.8L1209.2 905.9L1216.6 913.9L1223.9 922.1L1230.8 930.6L1237.4 939.3L1243.5 948.4L1249.1 957.7L1254.7 967.1M1065.5 824.2L1076.1 825.6L1086.7 827.3L1096.9 830.4L1106.7 834.5L1116.2 839.4L1125.4 845.0L1134.3 850.9L1143.0 857.2L1151.5 863.7L1159.7 870.6L1167.7 877.7L1175.5 885.0L1183.0 892.6L1190.4 900.4L1197.8 908.1L1205.2 915.8L1212.6 923.5L1219.9 931.3L1227.0 939.4L1233.7 947.7L1240.0 956.2L1246.1 964.9L1252.2 973.6M1063.8 839.3L1074.1 840.9L1084.2 843.0L1094.0 846.4L1103.4 850.8L1112.5 855.8L1121.2 861.4L1129.8 867.2L1138.2 873.4L1146.4 879.8L1154.4 886.4L1162.2 893.2L1170.0 900.2L1177.5 907.3L1185.0 914.4L1192.5 921.6L1199.9 928.8L1207.4 936.1L1214.7 943.4L1221.9 950.9L1228.8 958.6L1235.6 966.4L1242.2 974.3L1248.8 982.1M1062.4 852.0L1072.4 853.6L1082.2 856.0L1091.5 859.8L1100.6 864.4L1109.3 869.5L1117.8 875.0L1126.1 880.8L1134.2 886.9L1142.1 893.2L1149.9 899.6L1157.7 906.2L1165.3 912.8L1173.0 919.4L1180.5 926.2L1188.1 932.9L1195.6 939.7L1203.1 946.5L1210.4 953.4L1217.7 960.5L1224.8 967.7L1231.9 974.9L1238.9 982.1L1246.1 989.2M1067.5 806.5 L1061.8 857.0M1100.3 811.6 L1090.6 865.1M1130.2 825.9 L1116.4 880.5M1157.4 845.0 L1140.5 898.5M1182.0 867.3 L1163.5 917.8M1196.6 884.0 L1178.7 930.8M1218.7 908.9 L1201.3 950.7M1239.4 934.9 L1223.2 971.3M1256.0 963.7 L1245.0 992.0M1058.4 862.1L1067.1 865.2L1075.6 869.0L1084.1 873.8L1092.6 879.1L1101.2 884.6L1109.7 890.1L1118.1 895.9L1126.4 901.8L1134.5 907.8L1142.6 914.0L1150.6 920.2L1158.6 926.5L1166.5 932.8L1174.4 939.1L1182.4 945.5L1190.3 951.8L1198.2 958.1L1206.0 964.4L1213.8 970.8L1221.4 977.3L1229.1 983.7L1236.9 990.2L1244.7 996.5M1052.7 870.6L1059.5 876.0L1066.1 881.8L1073.3 888.3L1081.2 894.6L1089.8 900.5L1098.6 906.1L1107.3 911.8L1116.0 917.5L1124.7 923.3L1133.3 929.1L1141.8 935.0L1150.3 941.0L1158.8 946.9L1167.3 953.0L1175.8 958.9L1184.3 964.7L1192.9 970.5L1201.5 976.1L1210.1 981.6L1218.6 987.2L1227.1 992.8L1235.6 998.4L1244.2 1004.0M1047.0 879.1L1051.8 886.8L1056.6 894.7L1062.4 902.8L1069.8 910.1L1078.4 916.5L1087.5 922.2L1096.6 927.8L1105.7 933.3L1114.8 938.8L1124.0 944.3L1133.1 949.8L1142.1 955.4L1151.2 961.1L1160.2 966.8L1169.2 972.3L1178.4 977.7L1187.6 982.8L1197.0 987.7L1206.3 992.4L1215.7 997.1L1225.0 1001.9L1234.3 1006.7L1243.7 1011.5M1041.7 886.9L1044.8 896.7L1047.9 906.5L1052.5 916.1L1059.4 924.4L1067.9 931.2L1077.2 936.9L1086.7 942.4L1096.2 947.8L1105.8 953.1L1115.4 958.2L1125.0 963.4L1134.6 968.7L1144.1 974.1L1153.6 979.5L1163.2 984.7L1172.9 989.6L1182.8 994.2L1192.8 998.4L1202.9 1002.3L1213.0 1006.2L1223.1 1010.2L1233.2 1014.3L1243.2 1018.4M1061.8 857.0 L1039.0 891.0M1090.6 865.1 L1047.3 923.0M1116.4 880.5 L1071.9 944.6M1140.5 898.5 L1101.1 960.5M1163.5 917.8 L1130.6 975.7M1178.7 930.8 L1150.2 986.1M1201.3 950.7 L1180.2 1000.2M1223.2 971.3 L1211.7 1011.0M1245.0 992.0 L1243.0 1022.0M1039.5 895.0L1041.8 906.4L1044.2 917.7L1047.9 928.7L1053.6 938.5L1060.9 947.0L1069.1 954.4L1077.4 961.6L1086.1 968.6L1094.9 975.4L1103.9 982.0L1113.1 988.5L1122.8 994.7L1132.9 1000.3L1143.4 1005.0L1154.1 1008.6L1164.9 1012.0L1175.8 1015.0L1186.9 1017.5L1198.0 1019.7L1209.2 1021.9L1220.3 1024.1L1231.4 1026.4L1242.5 1028.8M1040.0 899.0L1042.5 910.9L1045.1 922.7L1048.6 934.3L1053.3 945.2L1059.5 955.0L1066.3 964.1L1073.4 973.1L1080.9 981.7L1088.7 990.3L1096.7 998.5L1105.5 1006.4L1114.9 1013.7L1125.3 1019.8L1136.6 1023.8L1148.1 1026.2L1159.7 1028.1L1171.4 1029.8L1183.1 1031.0L1194.9 1031.9L1206.7 1032.8L1218.5 1033.7L1230.3 1034.6L1242.0 1035.5M1040.5 903.0L1043.2 915.4L1046.0 927.7L1049.2 940.0L1053.1 951.8L1058.0 963.1L1063.5 973.9L1069.3 984.5L1075.7 994.9L1082.5 1005.1L1089.6 1015.1L1097.8 1024.4L1107.1 1032.8L1117.8 1039.3L1129.8 1042.7L1142.1 1043.7L1154.5 1044.3L1166.9 1044.6L1179.4 1044.5L1191.8 1044.1L1204.3 1043.7L1216.7 1043.3L1229.1 1042.8L1241.5 1042.2M1039.0 891.0 L1041.0 907.0M1047.3 923.0 L1049.8 945.6M1081.5 950.1 L1065.3 996.0M1111.0 965.5 L1082.5 1031.6M1140.4 980.9 L1110.3 1058.7M1170.1 995.8 L1149.4 1060.5M1211.7 1011.0 L1201.8 1054.6M1243.0 1022.0 L1241.0 1049.0M837.6 1005.7L846.5 1001.1L855.3 996.5L864.2 992.0L873.1 987.4L881.9 982.8L890.7 978.1L899.4 973.4L908.1 968.7L916.7 963.8L925.3 959.0L934.1 954.4L943.0 950.0L951.9 945.7L961.0 941.6L970.1 937.6L979.2 933.7L988.4 929.8L997.6 925.9L1006.8 921.9L1015.9 918.0L1025.1 914.1L1034.3 910.2L1043.5 906.3M834.2 1013.7L843.6 1009.5L852.9 1005.3L862.2 1001.1L871.6 997.0L880.9 992.9L890.1 988.8L899.4 984.7L908.6 980.6L917.7 976.4L926.8 972.3L936.1 968.4L945.4 964.6L954.8 961.0L964.3 957.6L973.9 954.2L983.5 950.8L993.1 947.4L1002.7 944.0L1012.3 940.5L1021.9 937.0L1031.5 933.6L1041.1 930.1L1050.8 926.6M829.2 1025.7L839.3 1022.1L849.3 1018.4L859.3 1014.8L869.3 1011.3L879.4 1008.0L889.3 1004.8L899.3 1001.6L909.2 998.5L919.1 995.4L929.0 992.3L939.0 989.4L949.0 986.7L959.1 984.1L969.3 981.6L979.5 979.0L989.8 976.5L1000.0 973.9L1010.3 971.1L1020.5 968.4L1030.8 965.5L1041.1 962.7L1051.3 959.9L1061.6 957.1M823.7 1039.0L834.5 1036.0L845.2 1033.0L856.0 1030.0L866.9 1027.3L877.7 1024.8L888.5 1022.5L899.3 1020.4L910.0 1018.4L920.7 1016.4L931.5 1014.5L942.3 1012.8L953.1 1011.2L963.9 1009.7L974.9 1008.2L985.8 1006.7L996.8 1005.0L1007.8 1003.2L1018.8 1001.3L1029.7 999.3L1040.7 997.2L1051.7 995.1L1062.7 993.0L1073.7 990.9M818.1 1052.3L829.7 1049.9L841.2 1047.6L852.8 1045.2L864.4 1043.2L876.0 1041.6L887.6 1040.3L899.2 1039.2L910.8 1038.3L922.3 1037.5L933.9 1036.8L945.5 1036.1L957.1 1035.6L968.8 1035.3L980.4 1034.9L992.1 1034.3L1003.8 1033.5L1015.5 1032.6L1027.2 1031.5L1038.9 1030.2L1050.6 1028.9L1062.3 1027.5L1074.0 1026.1L1085.7 1024.8M814.2 1061.7L826.3 1059.7L838.4 1057.8L850.5 1055.8L862.6 1054.4L874.8 1053.4L887.0 1052.7L899.1 1052.3L911.3 1052.2L923.5 1052.2L935.6 1052.3L947.8 1052.5L960.0 1052.8L972.1 1053.2L984.3 1053.5L996.5 1053.6L1008.7 1053.5L1020.9 1053.2L1033.1 1052.6L1045.4 1051.9L1057.6 1051.0L1069.8 1050.2L1082.0 1049.3L1094.2 1048.5M839.8 1000.4 L812.0 1067.0M865.5 985.9 L849.2 1061.9M891.0 971.0 L886.6 1059.8M916.1 955.4 L924.1 1060.7M941.4 940.2 L961.6 1062.6M958.7 930.9 L986.5 1064.2M985.3 918.0 L1024.0 1064.9M1012.0 905.4 L1061.5 1063.7M1038.7 892.8 L1099.0 1062.0M1306.5 669.0L1311.0 676.5L1315.3 684.1L1319.2 691.9L1322.9 699.8L1326.2 707.9L1328.8 716.2L1330.1 724.7L1329.9 733.0L1328.6 741.1L1326.6 748.9L1324.1 756.4L1322.5 764.5L1322.1 773.0L1322.6 781.7L1323.5 790.4L1325.4 798.9L1328.1 807.2L1330.0 815.6L1329.9 823.2L1329.5 829.9L1328.8 835.6L1328.3 840.2L1327.4 844.7M1308.6 669.0L1313.6 676.9L1318.5 684.9L1323.0 693.0L1327.3 701.3L1331.3 709.7L1334.6 718.4L1337.1 727.2L1338.4 736.0L1338.9 744.6L1338.8 753.1L1338.5 761.4L1338.6 770.1L1339.2 779.2L1340.1 788.5L1340.4 797.8L1342.5 806.9L1345.8 815.6L1347.3 824.6L1344.8 832.0L1341.2 837.7L1337.3 841.3L1333.8 842.7L1330.2 843.8M1310.7 669.0L1316.2 677.3L1321.7 685.6L1326.8 694.1L1331.7 702.8L1336.3 711.6L1340.5 720.6L1344.0 729.8L1346.8 739.0L1349.1 748.2L1351.1 757.3L1352.9 766.4L1354.6 775.8L1356.3 785.4L1357.5 795.3L1357.4 805.2L1359.6 814.9L1363.5 824.0L1364.7 833.6L1359.6 840.8L1352.9 845.5L1345.7 847.0L1339.3 845.3L1333.1 842.9M1304.4 669.0 L1312.8 669.0M1315.4 690.8 L1330.6 695.3M1322.9 714.0 L1346.3 722.8M1318.3 737.5 L1359.4 751.7M1306.5 758.8 L1370.7 781.4M1305.2 775.0 L1375.0 802.1M1310.4 798.8 L1381.2 832.3M1317.8 822.1 L1364.6 853.4M1324.5 845.6 L1336.0 842.0M1313.2 858.1L1309.0 865.4L1304.8 872.8L1300.7 880.1L1296.6 887.4L1292.7 894.9L1289.1 902.5L1285.8 910.2L1282.8 918.1L1280.2 926.1L1278.0 934.2L1276.0 942.4L1274.3 950.6L1272.9 958.9L1272.0 967.3L1271.6 975.7L1271.5 984.1L1271.9 992.5L1272.4 1000.8L1273.2 1009.1L1274.1 1017.4L1275.0 1025.7L1275.9 1034.0L1276.7 1042.3M1323.3 856.8L1319.4 864.1L1315.4 871.5L1311.4 878.9L1307.5 886.3L1303.8 893.8L1300.4 901.4L1297.3 909.2L1294.6 917.1L1292.3 925.1L1290.2 933.2L1288.5 941.4L1286.9 949.7L1285.6 957.9L1284.6 966.2L1284.0 974.6L1283.5 982.9L1283.4 991.2L1283.3 999.5L1283.4 1007.8L1283.6 1016.1L1283.8 1024.3L1284.0 1032.6L1284.2 1040.8M1333.5 855.4L1329.7 862.8L1325.9 870.2L1322.2 877.6L1318.4 885.1L1314.9 892.6L1311.7 900.3L1308.9 908.2L1306.4 916.1L1304.3 924.2L1302.4 932.3L1300.9 940.5L1299.6 948.7L1298.3 956.9L1297.2 965.2L1296.3 973.5L1295.5 981.7L1294.8 990.0L1294.2 998.3L1293.7 1006.5L1293.1 1014.7L1292.6 1023.0L1292.1 1031.2L1291.6 1039.4M1303.0 859.5 L1343.7 854.0M1289.9 881.3 L1332.9 876.4M1274.2 911.2 L1320.5 907.1M1265.8 935.2 L1314.6 931.3M1260.2 959.9 L1311.0 955.9M1259.5 985.3 L1307.5 980.6M1264.6 1018.7 L1302.7 1013.4M1269.3 1043.7 L1299.0 1038.0M811.2 1067.5L812.7 1065.5L814.2 1063.6L815.7 1061.6L817.2 1059.7L818.8 1057.8L820.4 1055.9L822.1 1054.0L823.8 1052.2L825.5 1050.5L827.3 1048.7L829.1 1047.0L830.8 1045.4L832.8 1043.7L834.7 1042.1L836.7 1040.6L838.8 1039.1L840.9 1037.6L843.2 1036.2L845.5 1034.9L847.8 1033.6L850.2 1032.3L852.5 1031.0L854.9 1029.7M810.5 1068.0 L812.0 1067.0M815.7 1042.4 L831.8 1062.1M823.8 1021.0 L849.6 1060.2M839.8 1000.4 L870.0 1059.0"/>
<path stroke-width="4.4" d="M1135.0 671.0L1137.0 671.4L1141.0 672.2L1147.0 673.4L1155.0 675.1L1164.3 677.8L1174.9 681.5L1186.9 686.3L1200.1 692.2L1212.7 698.2L1224.6 704.2L1235.8 710.4L1246.2 716.6L1256.6 723.6L1266.9 731.2L1277.0 739.5L1287.0 748.5L1294.5 755.2L1299.5 759.8L1302.0 762.0M1087.6 757.9L1089.9 758.3L1094.5 759.0L1101.5 760.2L1110.7 761.7L1120.3 764.6L1130.2 768.8L1140.5 774.4L1151.1 781.3L1161.4 788.2L1171.5 795.1L1181.2 801.9L1190.8 808.8L1199.4 816.0L1207.3 823.7L1214.4 831.8L1220.6 840.2L1226.9 848.2L1233.3 855.8L1239.8 862.8L1246.2 869.2L1252.6 875.6L1258.7 881.9L1264.6 888.0L1270.4 894.0L1274.7 898.5L1277.6 901.5L1279.0 903.0M1067.5 806.5L1069.8 806.8L1074.2 807.3L1081.0 808.1L1090.0 809.1L1099.1 811.2L1108.4 814.4L1117.8 818.7L1127.2 824.0L1136.6 829.8L1145.9 836.2L1155.0 843.1L1164.0 850.4L1172.2 857.7L1179.6 864.8L1186.2 871.8L1192.1 878.7L1198.7 886.4L1206.1 894.9L1214.4 904.2L1223.4 914.2L1231.4 924.0L1238.3 933.3L1244.1 942.3L1248.9 950.8L1252.4 957.3L1254.8 961.6L1256.0 963.7M1061.8 857.0L1063.2 857.2L1066.1 857.8L1070.3 858.5L1076.0 859.5L1082.7 861.7L1090.3 865.0L1098.9 869.5L1108.4 875.2L1118.4 881.8L1128.9 889.4L1139.8 898.0L1151.3 907.5L1162.2 916.7L1172.7 925.6L1182.7 934.2L1192.2 942.6L1200.9 950.3L1208.9 957.6L1216.1 964.4L1222.4 970.6L1228.0 976.1L1232.8 980.7L1236.9 984.5L1240.1 987.5L1242.6 989.8L1244.2 991.2L1245.0 992.0M1039.0 891.0L1039.5 893.4L1040.4 898.2L1041.8 905.4L1043.8 915.0L1047.5 923.6L1053.2 931.3L1060.8 938.0L1070.3 943.7L1079.9 949.2L1089.4 954.4L1098.9 959.4L1108.4 964.2L1118.7 969.4L1129.6 975.1L1141.3 981.3L1153.6 988.0L1165.6 993.9L1177.1 999.0L1188.2 1003.2L1198.9 1006.8L1208.7 1010.0L1217.6 1013.0L1225.5 1015.8L1232.5 1018.2L1237.8 1020.1L1241.2 1021.4L1243.0 1022.0M1304.4 669.0L1304.9 669.9L1306.0 671.8L1307.5 674.5L1309.6 678.2L1312.0 682.9L1314.5 688.4L1317.2 694.9L1320.1 702.4L1322.1 709.3L1323.2 715.6L1323.3 721.4L1322.5 726.7L1320.7 732.4L1317.9 738.4L1314.2 744.9L1309.4 751.7L1306.3 759.2L1304.9 767.4L1305.2 776.2L1307.1 785.8L1309.3 795.0L1311.8 804.0L1314.5 812.8L1317.5 821.2L1319.9 828.4L1321.7 834.0L1322.9 838.3L1323.6 841.3L1324.0 843.4L1324.3 844.9L1324.5 845.6M1038.7 892.8L1038.8 893.7L1039.1 895.5L1039.6 898.1L1040.1 901.7L1041.3 906.2L1043.0 911.7L1045.4 918.2L1048.3 925.8L1052.3 932.7L1057.2 939.1L1063.2 944.9L1070.3 950.1L1078.2 957.3L1086.9 966.4L1096.6 977.4L1107.1 990.3L1113.5 1003.2L1115.9 1016.1L1114.1 1028.9L1108.3 1041.8L1103.9 1051.4L1101.0 1057.8L1099.5 1061.0"/>
<path stroke-width="2" stroke="#0a0a0a" d="M1135.0 671.0L1137.0 671.4L1141.0 672.2L1147.0 673.4L1155.0 675.1L1164.3 677.8L1174.9 681.5L1186.9 686.3L1200.1 692.2L1212.7 698.2L1224.6 704.2L1235.8 710.4L1246.2 716.6L1256.6 723.6L1266.9 731.2L1277.0 739.5L1287.0 748.5L1294.5 755.2L1299.5 759.8L1302.0 762.0M1087.6 757.9L1089.9 758.3L1094.5 759.0L1101.5 760.2L1110.7 761.7L1120.3 764.6L1130.2 768.8L1140.5 774.4L1151.1 781.3L1161.4 788.2L1171.5 795.1L1181.2 801.9L1190.8 808.8L1199.4 816.0L1207.3 823.7L1214.4 831.8L1220.6 840.2L1226.9 848.2L1233.3 855.8L1239.8 862.8L1246.2 869.2L1252.6 875.6L1258.7 881.9L1264.6 888.0L1270.4 894.0L1274.7 898.5L1277.6 901.5L1279.0 903.0M1067.5 806.5L1069.8 806.8L1074.2 807.3L1081.0 808.1L1090.0 809.1L1099.1 811.2L1108.4 814.4L1117.8 818.7L1127.2 824.0L1136.6 829.8L1145.9 836.2L1155.0 843.1L1164.0 850.4L1172.2 857.7L1179.6 864.8L1186.2 871.8L1192.1 878.7L1198.7 886.4L1206.1 894.9L1214.4 904.2L1223.4 914.2L1231.4 924.0L1238.3 933.3L1244.1 942.3L1248.9 950.8L1252.4 957.3L1254.8 961.6L1256.0 963.7M1061.8 857.0L1063.2 857.2L1066.1 857.8L1070.3 858.5L1076.0 859.5L1082.7 861.7L1090.3 865.0L1098.9 869.5L1108.4 875.2L1118.4 881.8L1128.9 889.4L1139.8 898.0L1151.3 907.5L1162.2 916.7L1172.7 925.6L1182.7 934.2L1192.2 942.6L1200.9 950.3L1208.9 957.6L1216.1 964.4L1222.4 970.6L1228.0 976.1L1232.8 980.7L1236.9 984.5L1240.1 987.5L1242.6 989.8L1244.2 991.2L1245.0 992.0M1039.0 891.0L1039.5 893.4L1040.4 898.2L1041.8 905.4L1043.8 915.0L1047.5 923.6L1053.2 931.3L1060.8 938.0L1070.3 943.7L1079.9 949.2L1089.4 954.4L1098.9 959.4L1108.4 964.2L1118.7 969.4L1129.6 975.1L1141.3 981.3L1153.6 988.0L1165.6 993.9L1177.1 999.0L1188.2 1003.2L1198.9 1006.8L1208.7 1010.0L1217.6 1013.0L1225.5 1015.8L1232.5 1018.2L1237.8 1020.1L1241.2 1021.4L1243.0 1022.0M1304.4 669.0L1304.9 669.9L1306.0 671.8L1307.5 674.5L1309.6 678.2L1312.0 682.9L1314.5 688.4L1317.2 694.9L1320.1 702.4L1322.1 709.3L1323.2 715.6L1323.3 721.4L1322.5 726.7L1320.7 732.4L1317.9 738.4L1314.2 744.9L1309.4 751.7L1306.3 759.2L1304.9 767.4L1305.2 776.2L1307.1 785.8L1309.3 795.0L1311.8 804.0L1314.5 812.8L1317.5 821.2L1319.9 828.4L1321.7 834.0L1322.9 838.3L1323.6 841.3L1324.0 843.4L1324.3 844.9L1324.5 845.6M1038.7 892.8L1038.8 893.7L1039.1 895.5L1039.6 898.1L1040.1 901.7L1041.3 906.2L1043.0 911.7L1045.4 918.2L1048.3 925.8L1052.3 932.7L1057.2 939.1L1063.2 944.9L1070.3 950.1L1078.2 957.3L1086.9 966.4L1096.6 977.4L1107.1 990.3L1113.5 1003.2L1115.9 1016.1L1114.1 1028.9L1108.3 1041.8L1103.9 1051.4L1101.0 1057.8L1099.5 1061.0"/>
<polyline stroke-width="1.3" points="1137.0,674.0 1145.0,660.0 1152.0,598.0 1157.0,498.0 1162.0,380.0 1163.0,267.0 1159.5,184.0 1157.0,169.0 1194.0,147.0 1262.5,143.5 1330.0,155.0 1328.0,174.0 1321.0,277.0 1307.0,392.0 1292.0,508.0 1289.5,603.0 1304.0,660.0 1314.0,679.0"/>
<polygon stroke-width="1.6" points="1343.7,854.0 1317.7,908.0 1308.4,975.0 1299.0,1038.0 1285.0,1043.0 1269.3,1043.7 1256.3,975.0 1267.4,926.5 1280.5,897.0 1303.0,859.5 1328.8,842.8"/>
<polygon stroke-width="4.6" points="1135.0,671.0 1167.0,677.5 1220.0,701.0 1262.0,726.0 1302.0,762.0 1321.3,734.6 1324.5,713.5 1312.8,683.8 1304.4,669.0 1312.8,669.0 1331.9,696.5 1350.9,730.4 1376.3,793.8 1373.0,817.0 1384.8,838.0 1378.4,848.8 1357.3,856.0 1336.0,842.0 1324.5,845.6 1303.0,859.5 1280.5,897.0 1258.0,934.0 1243.0,993.5 1241.4,1049.0 1200.0,1055.0 1151.0,1061.0 1084.6,1064.6 1010.6,1066.0 932.0,1062.7 870.0,1059.0 810.5,1069.0 814.0,1047.0 823.4,1019.0 839.8,1000.4 893.6,970.0 940.4,939.6 998.9,911.5 1038.7,892.8 1031.0,883.7 1061.8,857.0 1063.0,830.0 1067.5,806.5 1087.6,757.9 1103.5,719.8 1122.5,681.7"/>
<polygon stroke-width="2" stroke="#0a0a0a" points="1135.0,671.0 1167.0,677.5 1220.0,701.0 1262.0,726.0 1302.0,762.0 1321.3,734.6 1324.5,713.5 1312.8,683.8 1304.4,669.0 1312.8,669.0 1331.9,696.5 1350.9,730.4 1376.3,793.8 1373.0,817.0 1384.8,838.0 1378.4,848.8 1357.3,856.0 1336.0,842.0 1324.5,845.6 1303.0,859.5 1280.5,897.0 1258.0,934.0 1243.0,993.5 1241.4,1049.0 1200.0,1055.0 1151.0,1061.0 1084.6,1064.6 1010.6,1066.0 932.0,1062.7 870.0,1059.0 810.5,1069.0 814.0,1047.0 823.4,1019.0 839.8,1000.4 893.6,970.0 940.4,939.6 998.9,911.5 1038.7,892.8 1031.0,883.7 1061.8,857.0 1063.0,830.0 1067.5,806.5 1087.6,757.9 1103.5,719.8 1122.5,681.7"/>
<polyline stroke-width="3" stroke-opacity="0.9" points="810.5,1069.8 870.0,1060.0 932.0,1063.5 1010.0,1066.8 1085.0,1065.2 1151.0,1061.8 1200.0,1055.8 1241.0,1049.8"/>
</g>
<g stroke="#c01818" stroke-width="1.1" fill="none"><path d="M1500 878L1802 850M1500 878L1802 932M1500 878L1802 979"/></g>
<path fill-rule="evenodd" fill="#acacac" fill-opacity="0.8" d="M66 74H1802V1141H66Z M101 138H1767V1076H101Z"/><rect x="1767" y="1008" width="35" height="62" fill="url(#outw)"/><rect x="66" y="1076" width="1736" height="65" fill="#fff" fill-opacity="0.07"/>
<g stroke="#113b25" stroke-width="1" fill="none" shape-rendering="crispEdges">
<path d="M101.5 138V1076M170.5 138V1076M240.5 138V1076M309.5 138V1076M379.5 138V1076M448.5 138V1076M518.5 138V1076M587.5 138V1076M656.5 138V1076M726.5 138V1076M795.5 138V1076M865.5 138V1076M934.5 138V1076M1003.5 138V1076M1073.5 138V1076M1142.5 138V1076M1212.5 138V1076M1281.5 138V1076M1350.5 138V1076M1420.5 138V1076M1489.5 138V1076M1559.5 138V1076M1628.5 138V1076M1698.5 138V1076M1767.5 138V1076M101 138.5H1767M101 177.5H1767M101 216.5H1767M101 255.5H1767M101 294.5H1767M101 333.5H1767M101 372.5H1767M101 412.5H1767M101 451.5H1767M101 490.5H1767M101 529.5H1767M101 568.5H1767M101 607.5H1767M101 646.5H1767M101 685.5H1767M101 724.5H1767M101 763.5H1767M101 802.5H1767M101 842.5H1767M101 881.5H1767M101 920.5H1767M101 959.5H1767M101 998.5H1767M101 1037.5H1767M101 1076.5H1767"/>
<path clip-path="url(#cAll)" stroke="#1d5c3e" d="M101.5 138V1076M170.5 138V1076M240.5 138V1076M309.5 138V1076M379.5 138V1076M448.5 138V1076M518.5 138V1076M587.5 138V1076M656.5 138V1076M726.5 138V1076M795.5 138V1076M865.5 138V1076M934.5 138V1076M1003.5 138V1076M1073.5 138V1076M1142.5 138V1076M1212.5 138V1076M1281.5 138V1076M1350.5 138V1076M1420.5 138V1076M1489.5 138V1076M1559.5 138V1076M1628.5 138V1076M1698.5 138V1076M1767.5 138V1076M101 138.5H1767M101 177.5H1767M101 216.5H1767M101 255.5H1767M101 294.5H1767M101 333.5H1767M101 372.5H1767M101 412.5H1767M101 451.5H1767M101 490.5H1767M101 529.5H1767M101 568.5H1767M101 607.5H1767M101 646.5H1767M101 685.5H1767M101 724.5H1767M101 763.5H1767M101 802.5H1767M101 842.5H1767M101 881.5H1767M101 920.5H1767M101 959.5H1767M101 998.5H1767M101 1037.5H1767M101 1076.5H1767"/>
</g>
<path d="M101 138L1767 1076M101 1076L1767 138" stroke="#113b25" stroke-width="1.1" fill="none"/>
<g font-size="9.6" fill="#26382e" stroke="#26382e" stroke-width="0.25">
<text x="872.4" y="602">1</text>
<text x="941" y="562.4">1</text>
<text x="1011.2" y="602">1</text>
<text x="941" y="640.6">1</text>
<text x="803.0" y="602">2</text>
<text x="941" y="523.3">2</text>
<text x="1080.6" y="602">2</text>
<text x="941" y="679.7">2</text>
<text x="733.5" y="602">3</text>
<text x="941" y="484.2">3</text>
<text x="1150.0" y="602">3</text>
<text x="941" y="718.8">3</text>
<text x="664.1" y="602">4</text>
<text x="941" y="445.2">4</text>
<text x="1219.5" y="602">4</text>
<text x="941" y="757.8">4</text>
<text x="594.7" y="602">5</text>
<text x="941" y="406.1">5</text>
<text x="1288.9" y="602">5</text>
<text x="941" y="796.9">5</text>
<text x="525.3" y="602">6</text>
<text x="941" y="367.0">6</text>
<text x="1358.3" y="602">6</text>
<text x="941" y="836.0">6</text>
<text x="455.9" y="602">7</text>
<text x="941" y="327.9">7</text>
<text x="1427.7" y="602">7</text>
<text x="941" y="875.1">7</text>
<text x="386.5" y="602">8</text>
<text x="941" y="288.8">8</text>
<text x="1497.1" y="602">8</text>
<text x="941" y="914.2">8</text>
<text x="317.1" y="602">9</text>
<text x="941" y="249.8">9</text>
<text x="1566.5" y="602">9</text>
<text x="941" y="953.2">9</text>
<text x="247.8" y="602">10</text>
<text x="941" y="210.7">10</text>
<text x="1636.2" y="602">10</text>
<text x="941" y="992.3">10</text>
<text x="178.4" y="602">11</text>
<text x="941" y="171.6">11</text>
<text x="1705.6" y="602">11</text>
<text x="941" y="1031.4">11</text>
</g>

<g font-size="10" font-weight="bold" fill="#f2f2f2" letter-spacing="0.55">
<text x="81" y="85.3">Verts:</text><text x="166" y="85.3">14203</text><text x="231" y="85.3">14082</text><text x="320" y="85.3">0</text>
<text x="81" y="105.3">Edges:</text><text x="166" y="105.3">27148</text><text x="231" y="105.3">26928</text><text x="320" y="105.3">0</text>
<text x="81" y="125.3">Faces:</text><text x="166" y="125.3">12982</text><text x="231" y="125.3">12882</text><text x="320" y="125.3">0</text>
<text x="81" y="145.3">Tris:</text><text x="166" y="145.3">25948</text><text x="231" y="145.3">25748</text><text x="320" y="145.3">0</text>
<text x="81" y="165.3">UVs:</text><text x="166" y="165.3">16853</text><text x="231" y="165.3">16732</text><text x="320" y="165.3">0</text>
<text x="866" y="1133" font-size="10" letter-spacing="0.5">2D Pan/Zoom : camera3</text>
</g>
<text x="904" y="92" font-size="10" letter-spacing="0.55" font-weight="bold" fill="#2c5840">1920 x 1080</text>
<g stroke-width="1.2" fill="none"><path d="M90 1116V1098" stroke="#35c04a"/><path d="M90 1116L100 1114" stroke="#c03030"/><path d="M90 1116Q84 1117 79 1114" stroke="#2030b0"/></g>
<g font-size="9" font-weight="bold"><text x="87.5" y="1098" fill="#35c04a">y</text><text x="96" y="1113" fill="#d03030">x</text><text x="74.5" y="1114" fill="#2030b0">z</text></g>
</g></svg><div class="abs" style="left:1803.5px;top:32px;width:4.5px;height:1115px;background:#3c3c3c;"></div>
<div class="abs" style="left:1808px;top:30px;width:158px;height:1114px;background:#444;"></div>
<div class="t" style="left:1819px;top:39px;font-size:11px;color:#d0d0d0;letter-spacing:0.1px;">List</div>
<div class="t" style="left:1851px;top:39px;font-size:11px;color:#d0d0d0;letter-spacing:0.1px;">Selected</div>
<div class="t" style="left:1909px;top:39px;font-size:11px;color:#d0d0d0;letter-spacing:0.1px;">Focus</div>
<div class="t" style="left:1954px;top:39px;font-size:11px;color:#d0d0d0;letter-spacing:0.1px;">Attributes</div>
<div class="abs" style="left:1816px;top:71px;width:148px;height:18px;background:#4d4d4d;border-radius:2px 2px 0 0;border-top:1px solid #5a5a5a;box-sizing:border-box;"></div>
<div class="abs" style="left:1808px;top:89px;width:158px;height:1px;background:#404040;"></div>
<div class="t" style="left:1828px;top:75px;font-size:11px;color:#eeeeee;letter-spacing:0.05px;">Female_Knight_FullPlate</div>
<div class="t" style="right:5px;top:124px;font-size:11px;color:#c8c8c8;letter-spacing:0.1px;">transform:</div>
<div class="abs" style="left:1821px;top:180px;width:145px;height:18px;background:#5d5d5d;border-radius:2px 0 0 2px;"></div>
<div class="t" style="left:1854px;top:184px;font-size:11px;color:#c9c9c9;font-weight:bold;">Transform Attributes</div>
<div class="abs" style="left:1821px;top:198px;width:145px;height:150px;background:#474747;"></div>
<div class="t" style="right:-1px;top:206px;font-size:11px;color:#c8c8c8;letter-spacing:0.1px;">Translate</div>
<div class="t" style="right:-1px;top:228px;font-size:11px;color:#c8c8c8;letter-spacing:0.1px;">Rotate</div>
<div class="t" style="right:-1px;top:250px;font-size:11px;color:#c8c8c8;letter-spacing:0.1px;">Scale</div>
<div class="t" style="right:-1px;top:272px;font-size:11px;color:#c8c8c8;letter-spacing:0.1px;">Shear</div>
<div class="t" style="right:-1px;top:294px;font-size:11px;color:#c8c8c8;letter-spacing:0.1px;">Rotate Order</div>
<div class="t" style="right:-1px;top:316px;font-size:11px;color:#c8c8c8;letter-spacing:0.1px;">Rotate Axis</div>
<div class="abs" style="left:1826px;top:352px;width:141px;height:27px;background:#474747;border:1px solid #2e2e2e;border-radius:3px 0 0 3px;box-sizing:border-box;"></div>
<div class="t" style="left:1859px;top:361px;font-size:11px;color:#c8c8c8;letter-spacing:0.1px;">Offset Parent Matrix</div>
<div class="abs" style="left:1821px;top:384px;width:145px;height:19px;background:#5d5d5d;border-radius:2px 0 0 2px;"></div>
<div class="t" style="left:1854px;top:388.5px;font-size:11px;color:#c9c9c9;font-weight:bold;">Pivots</div>
<div class="abs" style="left:1821px;top:406px;width:145px;height:19px;background:#5d5d5d;border-radius:2px 0 0 2px;"></div>
<div class="t" style="left:1854px;top:410.5px;font-size:11px;color:#c9c9c9;font-weight:bold;">Limit Information</div>
<div class="abs" style="left:1821px;top:428px;width:145px;height:19px;background:#5d5d5d;border-radius:2px 0 0 2px;"></div>
<div class="t" style="left:1854px;top:432.5px;font-size:11px;color:#c9c9c9;font-weight:bold;">Display</div>
<div class="abs" style="left:1821px;top:450px;width:145px;height:19px;background:#5d5d5d;border-radius:2px 0 0 2px;"></div>
<div class="t" style="left:1854px;top:454.5px;font-size:11px;color:#c9c9c9;font-weight:bold;">Node Behavior</div>
<div class="abs" style="left:1821px;top:472px;width:145px;height:19px;background:#5d5d5d;border-radius:2px 0 0 2px;"></div>
<div class="t" style="left:1854px;top:476.5px;font-size:11px;color:#c9c9c9;font-weight:bold;">UUID</div>
<div class="abs" style="left:1821px;top:494px;width:145px;height:19px;background:#5d5d5d;border-radius:2px 0 0 2px;"></div>
<div class="t" style="left:1854px;top:498.5px;font-size:11px;color:#c9c9c9;font-weight:bold;">Extra Attributes</div>
<svg width="1966" height="1182" viewBox="0 0 1966 1182"><g fill="#eeeeee"><path d="M1828 184.5h12l-6 7z"/><path d="M1836 359.5v12l7-6z"/><path d="M1831 387v12l7-6z"/><path d="M1831 409v12l7-6z"/><path d="M1831 431v12l7-6z"/><path d="M1831 453v12l7-6z"/><path d="M1831 475v12l7-6z"/><path d="M1831 497v12l7-6z"/></g></svg>
<div class="t" style="left:1824px;top:955.5px;font-size:10.5px;color:#c9c9c9;font-weight:bold;">Notes:&nbsp; Female_Knight_FullPlate</div>
<div class="abs" style="left:1815px;top:966px;width:151px;height:144px;background:#2b2b2b;"></div>
<div class="abs" style="left:1812px;top:1115px;width:150px;height:26px;background:#5d5d5d;"></div>
<div class="abs" style="left:1964px;top:1115px;width:2px;height:26px;background:#5d5d5d;"></div>
<div class="t" style="left:1812px;top:1124px;width:150px;text-align:center;font-size:10.3px;color:#eeeeee;letter-spacing:0.15px">Select</div>
<div class="abs" style="left:62px;top:1141.5px;width:1746px;height:5.7px;background:#3b3b3b;"></div>
<div class="abs" style="left:1808px;top:1145px;width:158px;height:4px;background:#3c3c3c;"></div>
<div class="abs" style="left:0px;top:1151.7px;width:1966px;height:28px;background:#2b2b2b;"></div>
<div class="abs" style="left:0px;top:1178.5px;width:1966px;height:4px;background:#5b7f93;"></div>
<svg width="1966" height="1182" viewBox="0 0 1966 1182"><g fill="#a4a4a4"><rect x="-25.2" y="1165" width="1.9" height="13.5"/><rect x="11.7" y="1165" width="1.9" height="13.5"/><rect x="48.6" y="1165" width="1.9" height="13.5"/><rect x="85.4" y="1165" width="1.9" height="13.5"/><rect x="122.3" y="1165" width="1.9" height="13.5"/><rect x="159.2" y="1165" width="1.9" height="13.5"/><rect x="196.1" y="1165" width="1.9" height="13.5"/><rect x="232.9" y="1165" width="1.9" height="13.5"/><rect x="269.8" y="1165" width="1.9" height="13.5"/><rect x="306.7" y="1165" width="1.9" height="13.5"/><rect x="343.6" y="1165" width="1.9" height="13.5"/><rect x="380.4" y="1165" width="1.9" height="13.5"/><rect x="417.3" y="1165" width="1.9" height="13.5"/><rect x="454.2" y="1165" width="1.9" height="13.5"/><rect x="491.1" y="1165" width="1.9" height="13.5"/><rect x="527.9" y="1165" width="1.9" height="13.5"/><rect x="564.8" y="1165" width="1.9" height="13.5"/><rect x="601.7" y="1165" width="1.9" height="13.5"/><rect x="638.6" y="1165" width="1.9" height="13.5"/><rect x="675.4" y="1165" width="1.9" height="13.5"/><rect x="712.3" y="1165" width="1.9" height="13.5"/><rect x="749.2" y="1165" width="1.9" height="13.5"/><rect x="786.1" y="1165" width="1.9" height="13.5"/><rect x="822.9" y="1165" width="1.9" height="13.5"/><rect x="859.8" y="1165" width="1.9" height="13.5"/><rect x="896.7" y="1165" width="1.9" height="13.5"/><rect x="933.6" y="1165" width="1.9" height="13.5"/><rect x="970.4" y="1165" width="1.9" height="13.5"/><rect x="1007.3" y="1165" width="1.9" height="13.5"/><rect x="1044.2" y="1165" width="1.9" height="13.5"/><rect x="1081.0" y="1165" width="1.9" height="13.5"/><rect x="1117.9" y="1165" width="1.9" height="13.5"/><rect x="1154.8" y="1165" width="1.9" height="13.5"/><rect x="1191.7" y="1165" width="1.9" height="13.5"/><rect x="1228.5" y="1165" width="1.9" height="13.5"/><rect x="1265.4" y="1165" width="1.9" height="13.5"/><rect x="1302.3" y="1165" width="1.9" height="13.5"/><rect x="1339.2" y="1165" width="1.9" height="13.5"/><rect x="1376.0" y="1165" width="1.9" height="13.5"/><rect x="1412.9" y="1165" width="1.9" height="13.5"/><rect x="1449.8" y="1165" width="1.9" height="13.5"/><rect x="1486.7" y="1165" width="1.9" height="13.5"/><rect x="1523.5" y="1165" width="1.9" height="13.5"/><rect x="1560.4" y="1165" width="1.9" height="13.5"/><rect x="1597.3" y="1165" width="1.9" height="13.5"/><rect x="1634.2" y="1165" width="1.9" height="13.5"/><rect x="1671.0" y="1165" width="1.9" height="13.5"/><rect x="1707.9" y="1165" width="1.9" height="13.5"/><rect x="1744.8" y="1165" width="1.9" height="13.5"/><rect x="1781.7" y="1165" width="1.9" height="13.5"/><rect x="1818.5" y="1165" width="1.9" height="13.5"/><rect x="1855.4" y="1165" width="1.9" height="13.5"/><rect x="1892.3" y="1165" width="1.9" height="13.5"/><rect x="1929.1" y="1165" width="1.9" height="13.5"/></g><g font-size="10.5" fill="#a8a8a8"><text x="16.8" y="1161">14</text><text x="53.7" y="1161">16</text><text x="90.5" y="1161">18</text><text x="127.4" y="1161">20</text><text x="164.3" y="1161">22</text><text x="201.2" y="1161">24</text><text x="238.0" y="1161">26</text><text x="274.9" y="1161">28</text><text x="311.8" y="1161">30</text><text x="348.7" y="1161">32</text><text x="385.5" y="1161">34</text><text x="422.4" y="1161">36</text><text x="459.3" y="1161">38</text><text x="496.2" y="1161">40</text><text x="533.0" y="1161">42</text><text x="569.9" y="1161">44</text><text x="606.8" y="1161">46</text><text x="643.7" y="1161">48</text><text x="680.5" y="1161">50</text><text x="717.4" y="1161">52</text><text x="754.3" y="1161">54</text><text x="791.2" y="1161">56</text><text x="828.0" y="1161">58</text><text x="864.9" y="1161">60</text><text x="901.8" y="1161">62</text><text x="938.7" y="1161">64</text><text x="975.5" y="1161">66</text><text x="1012.4" y="1161">68</text><text x="1049.3" y="1161">70</text><text x="1086.1" y="1161">72</text><text x="1123.0" y="1161">74</text><text x="1159.9" y="1161">76</text><text x="1196.8" y="1161">78</text><text x="1233.6" y="1161">80</text><text x="1270.5" y="1161">82</text><text x="1307.4" y="1161">84</text><text x="1344.3" y="1161">86</text><text x="1381.1" y="1161">88</text><text x="1418.0" y="1161">90</text><text x="1454.9" y="1161">92</text><text x="1491.8" y="1161">94</text><text x="1528.6" y="1161">96</text><text x="1565.5" y="1161">98</text><text x="1602.4" y="1161">100</text><text x="1639.3" y="1161">102</text><text x="1676.1" y="1161">104</text><text x="1713.0" y="1161">106</text><text x="1749.9" y="1161">108</text><text x="1786.8" y="1161">110</text><text x="1823.6" y="1161">112</text><text x="1860.5" y="1161">114</text><text x="1897.4" y="1161">116</text><text x="1934.2" y="1161">118</text></g></svg>
</body></html>
